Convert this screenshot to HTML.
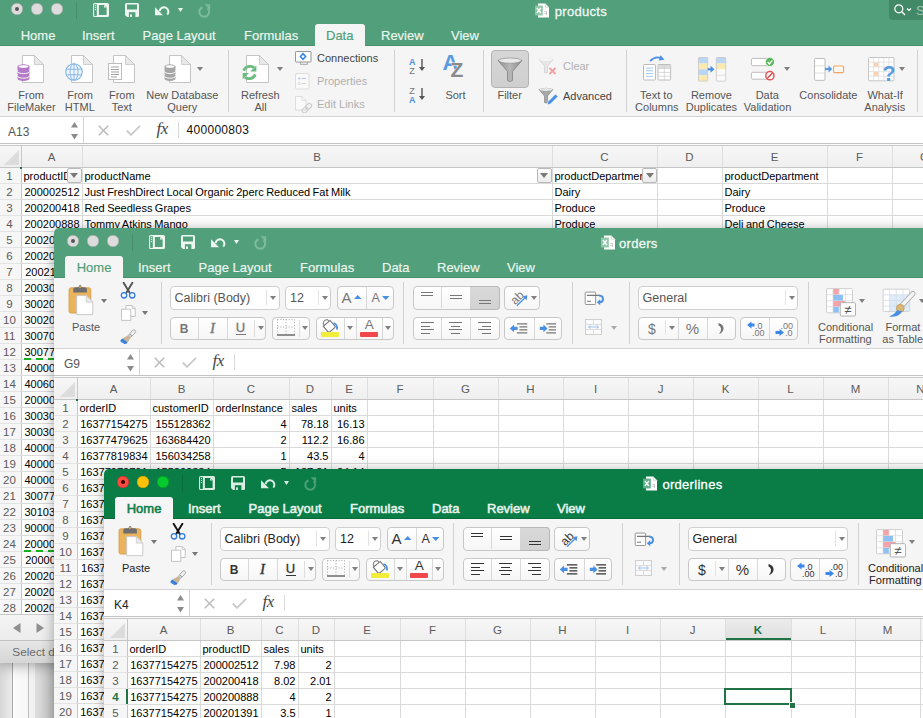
<!DOCTYPE html>
<html><head><meta charset="utf-8"><style>
html,body{margin:0;padding:0;width:923px;height:718px;overflow:hidden;background:#e9e9e9;}
body{position:relative;font-family:"Liberation Sans", sans-serif;}
.t{position:absolute;white-space:nowrap;line-height:1;}
.b{position:absolute;}
.win{position:absolute;overflow:hidden;}
</style></head><body>
<div class="b" style="left:0.0px;top:0.0px;width:923.0px;height:718.0px;background:linear-gradient(90deg,#d6d6d6 0px,#ebebeb 12px,#a9a9a9 12px,#a9a9a9 13px,#fbfbfb 13px,#f6f6f6 28px,#bdbdbd 28px,#bdbdbd 29px,#f3f3f3 29px,#efefef 35px,#dedede 35.5px,#c4c4c4 54px);"></div><div class="win" style="left:-2px;top:-4px;width:1160px;height:667px;border-radius:5px;box-shadow:0 2px 14px rgba(0,0,0,0.35);background:#fff;"><div class="b" style="left:0.0px;top:0.0px;width:1160.0px;height:50.0px;background:#52a07b;"></div><div class="b" style="left:0.0px;top:49.0px;width:1160.0px;height:1.0px;background:#46906c;"></div><div class="b" style="left:13.0px;top:7.0px;width:12.0px;height:12.0px;border-radius:50%;background:#dcdcdc;box-shadow:inset 0 0 0 0.5px #8a9a90;"></div><div class="b" style="left:33.0px;top:7.0px;width:12.0px;height:12.0px;border-radius:50%;background:#dcdcdc;box-shadow:inset 0 0 0 0.5px #8a9a90;"></div><div class="b" style="left:53.0px;top:7.0px;width:12.0px;height:12.0px;border-radius:50%;background:#dcdcdc;box-shadow:inset 0 0 0 0.5px #8a9a90;"></div><div class="b" style="left:17.0px;top:11.0px;width:4.0px;height:4.0px;border-radius:50%;background:#555;"></div><div class="b" style="left:78.0px;top:6.0px;width:1.0px;height:17.0px;background:rgba(0,0,0,0.12);"></div><svg class="b" style="left:95.0px;top:7.0px" width="16" height="14" viewBox="0 0 16 14"><rect x="0" y="0" width="16" height="14" rx="1.6" fill="#eef6f1"/><rect x="1.1" y="1.1" width="2.7" height="11.8" fill="#52a07b"/><circle cx="2.45" cy="2.6" r="0.65" fill="#eef6f1"/><circle cx="2.45" cy="4.6" r="0.65" fill="#eef6f1"/><circle cx="2.45" cy="6.6" r="0.65" fill="#eef6f1"/><path d="M5.9 2 H11 L13.6 4.6 V12 H5.9Z" fill="#52a07b"/><path d="M11 2.3 V4.6 H13.3Z" fill="#eef6f1"/></svg><svg class="b" style="left:127.0px;top:7.0px" width="14" height="14" viewBox="0 0 14 14"><path d="M1.5 0 H12.5 Q14 0 14 1.5 V12.5 Q14 14 12.5 14 H2 L0 12 V1.5 Q0 0 1.5 0Z" fill="#eef6f1"/><rect x="2" y="1.5" width="10" height="5" fill="#52a07b"/><rect x="3.9" y="9.2" width="6.5" height="4.8" fill="#52a07b"/><rect x="5.1" y="11.3" width="1.8" height="2.7" fill="#eef6f1"/></svg><svg class="b" style="left:157.0px;top:9.0px" width="16" height="11" viewBox="0 0 16 11"><path d="M0 2.3 V10.3 H8Z" fill="#eef6f1"/><path d="M4.6 6.2 A4.4 4.4 0 1 1 12.3 9.6" fill="none" stroke="#eef6f1" stroke-width="2"/></svg><svg class="b" style="left:180.2px;top:12.2px" width="5" height="4" viewBox="0 0 5 4"><path d="M0 0 H5 L2.5 4Z" fill="#eef6f1"/></svg><svg class="b" style="left:200.0px;top:8.0px" width="13" height="13.5" viewBox="0 0 13 13.5"><path d="M9.6 4.2 A4.9 4.9 0 1 1 4.5 3.2" fill="none" stroke="#7dbb9c" stroke-width="2"/><path d="M6.5 0.3 H12.2 V6Z" fill="#7dbb9c"/></svg><svg class="b" style="left:537.0px;top:6.5px" width="15" height="15" viewBox="0 0 15 15"><path d="M3 0.5 H10.3 L14 4.2 V14.5 H3Z" fill="#fff"/><path d="M10.3 0.8 V4.2 H13.7" fill="none" stroke="#c9c9c9" stroke-width="0.8"/><path d="M9.3 8.5 H12 M9.3 10.5 H12 M11.5 8.5 V12" stroke="#c4c4c4" stroke-width="0.8"/><rect x="0" y="2.6" width="7.8" height="9.8" fill="#8fc6a8"/><path d="M1.9 5 L5.9 10 M5.9 5 L1.9 10" stroke="#fff" stroke-width="1.3"/></svg><div class="t" style="left:556.8px;top:8.6px;font-size:13px;color:#f0f7f3;font-weight:normal;letter-spacing:0.3px;-webkit-text-stroke:0.3px currentColor;">products</div><div class="t" style="left:22.7px;top:33.0px;font-size:13px;color:#eef6f1;font-weight:normal;-webkit-text-stroke:0.15px currentColor;">Home</div><div class="t" style="left:84.0px;top:33.0px;font-size:13px;color:#eef6f1;font-weight:normal;-webkit-text-stroke:0.15px currentColor;">Insert</div><div class="t" style="left:144.5px;top:33.0px;font-size:13px;color:#eef6f1;font-weight:normal;-webkit-text-stroke:0.15px currentColor;">Page Layout</div><div class="t" style="left:246.0px;top:33.0px;font-size:13px;color:#eef6f1;font-weight:normal;-webkit-text-stroke:0.15px currentColor;">Formulas</div><div class="b" style="left:317.0px;top:28.0px;width:50.0px;height:22.0px;background:#f5f5f5;border-radius:3px 3px 0 0;"></div><div class="t" style="left:328.0px;top:33.0px;font-size:13px;color:#4f9e77;font-weight:normal;-webkit-text-stroke:0.15px currentColor;">Data</div><div class="t" style="left:383.0px;top:33.0px;font-size:13px;color:#eef6f1;font-weight:normal;-webkit-text-stroke:0.15px currentColor;">Review</div><div class="t" style="left:453.0px;top:33.0px;font-size:13px;color:#eef6f1;font-weight:normal;-webkit-text-stroke:0.15px currentColor;">View</div><div class="b" style="left:0.0px;top:50.0px;width:1160.0px;height:70.0px;background:#f5f5f5;"></div><div class="b" style="left:0.0px;top:120.0px;width:1160.0px;height:1.0px;background:#d3d3d3;"></div><svg class="b" style="left:24.0px;top:59.0px" width="22" height="28" viewBox="0 0 22 28"><path d="M0.5 0.5 H12.5 L21.5 9.5 V27.5 H0.5Z" fill="#fff" stroke="#c4c4c4" stroke-width="1"/><path d="M12.5 0.5 V9.5 H21.5Z" fill="#e9e9e9" stroke="#c4c4c4" stroke-width="0.8"/></svg><svg class="b" style="left:18.5px;top:67.5px" width="13" height="17" viewBox="0 0 13 17"><path d="M0.5 11.7 V14.7 A6.0 2.2 0 0 0 12.5 14.7 V11.7 Z" fill="#b57bc8"/><ellipse cx="6.5" cy="11.7" rx="6.0" ry="2.2" fill="#b57bc8"/><path d="M0.5 12.0 A6.0 2.2 0 0 0 12.5 12.0" fill="none" stroke="#fff" stroke-width="0.9"/><path d="M0.5 7.1 V10.1 A6.0 2.2 0 0 0 12.5 10.1 V7.1 Z" fill="#b57bc8"/><ellipse cx="6.5" cy="7.1" rx="6.0" ry="2.2" fill="#b57bc8"/><path d="M0.5 7.3999999999999995 A6.0 2.2 0 0 0 12.5 7.3999999999999995" fill="none" stroke="#fff" stroke-width="0.9"/><path d="M0.5 2.5 V5.5 A6.0 2.2 0 0 0 12.5 5.5 V2.5 Z" fill="#b57bc8"/><ellipse cx="6.5" cy="2.5" rx="6.0" ry="2.2" fill="#b57bc8"/><ellipse cx="6.5" cy="2.5" rx="4.9" ry="1.3" fill="#fff"/></svg><div class="t" style="left:-116.8px;width:300px;text-align:center;top:93.9px;font-size:11px;color:#555;font-weight:normal;">From</div><div class="t" style="left:-116.5px;width:300px;text-align:center;top:105.7px;font-size:11px;color:#555;font-weight:normal;">FileMaker</div><svg class="b" style="left:73.0px;top:59.0px" width="22" height="28" viewBox="0 0 22 28"><path d="M0.5 0.5 H12.5 L21.5 9.5 V27.5 H0.5Z" fill="#fff" stroke="#c4c4c4" stroke-width="1"/><path d="M12.5 0.5 V9.5 H21.5Z" fill="#e9e9e9" stroke="#c4c4c4" stroke-width="0.8"/></svg><svg class="b" style="left:66.5px;top:66.5px" width="18" height="18" viewBox="0 0 18 18"><circle cx="9" cy="9" r="8.2" fill="#eef5fd" stroke="#7fb2ea" stroke-width="1.1"/><ellipse cx="9" cy="9" rx="4" ry="8.2" fill="none" stroke="#7fb2ea" stroke-width="0.9"/><path d="M9 0.8 V17.2 M1.3 6.2 H16.7 M1.3 11.8 H16.7" stroke="#7fb2ea" stroke-width="0.9"/></svg><div class="t" style="left:-68.0px;width:300px;text-align:center;top:93.9px;font-size:11px;color:#555;font-weight:normal;">From</div><div class="t" style="left:-68.2px;width:300px;text-align:center;top:105.7px;font-size:11px;color:#555;font-weight:normal;">HTML</div><svg class="b" style="left:115.0px;top:59.0px" width="22" height="28" viewBox="0 0 22 28"><path d="M0.5 0.5 H12.5 L21.5 9.5 V27.5 H0.5Z" fill="#fff" stroke="#c4c4c4" stroke-width="1"/><path d="M12.5 0.5 V9.5 H21.5Z" fill="#e9e9e9" stroke="#c4c4c4" stroke-width="0.8"/></svg><svg class="b" style="left:110.0px;top:67.0px" width="14" height="17" viewBox="0 0 14 17"><rect x="0.5" y="0.5" width="13" height="16" fill="#fff" stroke="#bdbdbd"/><path d="M3 4 H11 M3 6.5 H11 M3 9 H11 M3 11.5 H11 M3 14 H9" stroke="#999" stroke-width="0.9"/></svg><div class="t" style="left:-26.2px;width:300px;text-align:center;top:93.9px;font-size:11px;color:#555;font-weight:normal;">From</div><div class="t" style="left:-26.2px;width:300px;text-align:center;top:105.7px;font-size:11px;color:#555;font-weight:normal;">Text</div><svg class="b" style="left:171.0px;top:59.0px" width="22" height="28" viewBox="0 0 22 28"><path d="M0.5 0.5 H12.5 L21.5 9.5 V27.5 H0.5Z" fill="#fff" stroke="#c4c4c4" stroke-width="1"/><path d="M12.5 0.5 V9.5 H21.5Z" fill="#e9e9e9" stroke="#c4c4c4" stroke-width="0.8"/></svg><svg class="b" style="left:165.5px;top:67.5px" width="12" height="17" viewBox="0 0 12 17"><path d="M0.5 11.7 V14.7 A5.5 2.2 0 0 0 11.5 14.7 V11.7 Z" fill="#a6a6a6"/><ellipse cx="6.0" cy="11.7" rx="5.5" ry="2.2" fill="#a6a6a6"/><path d="M0.5 12.0 A5.5 2.2 0 0 0 11.5 12.0" fill="none" stroke="#fff" stroke-width="0.9"/><path d="M0.5 7.1 V10.1 A5.5 2.2 0 0 0 11.5 10.1 V7.1 Z" fill="#a6a6a6"/><ellipse cx="6.0" cy="7.1" rx="5.5" ry="2.2" fill="#a6a6a6"/><path d="M0.5 7.3999999999999995 A5.5 2.2 0 0 0 11.5 7.3999999999999995" fill="none" stroke="#fff" stroke-width="0.9"/><path d="M0.5 2.5 V5.5 A5.5 2.2 0 0 0 11.5 5.5 V2.5 Z" fill="#a6a6a6"/><ellipse cx="6.0" cy="2.5" rx="5.5" ry="2.2" fill="#a6a6a6"/><ellipse cx="6.0" cy="2.5" rx="4.4" ry="1.3" fill="#fff"/></svg><svg class="b" style="left:198.5px;top:70.6px" width="6" height="4" viewBox="0 0 6 4"><path d="M0 0 H6 L3.0 4Z" fill="#808080"/></svg><div class="t" style="left:34.3px;width:300px;text-align:center;top:93.9px;font-size:11px;color:#555;font-weight:normal;">New Database</div><div class="t" style="left:34.2px;width:300px;text-align:center;top:105.7px;font-size:11px;color:#555;font-weight:normal;">Query</div><div class="b" style="left:230.0px;top:54.0px;width:1.0px;height:62.0px;background:#d0d0d0;"></div><svg class="b" style="left:248.0px;top:59.0px" width="23" height="28" viewBox="0 0 23 28"><path d="M0.5 0.5 H13.5 L22.5 9.5 V27.5 H0.5Z" fill="#fff" stroke="#c4c4c4" stroke-width="1"/><path d="M13.5 0.5 V9.5 H22.5Z" fill="#e9e9e9" stroke="#c4c4c4" stroke-width="0.8"/></svg><svg class="b" style="left:243.5px;top:68.5px" width="16" height="15" viewBox="0 0 16 15"><path d="M1.6 5.6 Q3.8 1.3 8.2 1.4 Q10.6 1.5 12 2.8" stroke="#6dbb7e" stroke-width="2.9" fill="none"/><path d="M14.4 0.4 V6.6 H8.2Z" fill="#6dbb7e"/><path d="M13.3 9.4 Q11.2 13.7 6.8 13.6 Q4.4 13.5 3 12.2" stroke="#6dbb7e" stroke-width="2.9" fill="none"/><path d="M0.7 8 H6.9 L0.7 14.2Z" fill="#6dbb7e"/></svg><svg class="b" style="left:279.0px;top:70.6px" width="6" height="4" viewBox="0 0 6 4"><path d="M0 0 H6 L3.0 4Z" fill="#808080"/></svg><div class="t" style="left:112.3px;width:300px;text-align:center;top:93.9px;font-size:11px;color:#555;font-weight:normal;">Refresh</div><div class="t" style="left:112.5px;width:300px;text-align:center;top:105.7px;font-size:11px;color:#555;font-weight:normal;">All</div><svg class="b" style="left:297.0px;top:55.0px" width="17" height="14" viewBox="0 0 17 14"><rect x="5.5" y="10" width="7" height="3.3" fill="#eee" stroke="#9a9a9a" stroke-width="0.8"/><rect x="0.5" y="0.5" width="15.5" height="10.5" rx="0.8" fill="#fff" stroke="#8a8a8a" stroke-width="0.9"/><path d="M8 2.6 L10.6 5.5 L8 8.4 L5.4 5.5Z" fill="#fff" stroke="#3b88e8" stroke-width="1.6"/></svg><div class="t" style="left:319.0px;top:56.7px;font-size:11px;color:#444;font-weight:normal;">Connections</div><svg class="b" style="left:297.0px;top:77.0px" width="15" height="17" viewBox="0 0 15 17"><rect x="0.5" y="0.5" width="13.5" height="15.5" rx="1.5" fill="#fafafa" stroke="#d9d9d9" stroke-width="0.9"/><circle cx="4.3" cy="5.5" r="1.1" fill="#a9c9ef"/><path d="M6.5 5.5 H11" stroke="#a9c9ef" stroke-width="1"/><circle cx="4.3" cy="10.5" r="1.1" fill="none" stroke="#d0d0d0" stroke-width="0.8"/><path d="M6.5 10.5 H11" stroke="#d6d6d6" stroke-width="1"/></svg><div class="t" style="left:319.0px;top:79.7px;font-size:11px;color:#b0b0b0;font-weight:normal;">Properties</div><svg class="b" style="left:297.0px;top:100.0px" width="18" height="17" viewBox="0 0 18 17"><path d="M0.5 0.5 H7 L11 4.5 V14 H0.5Z" fill="#fafafa" stroke="#d9d9d9" stroke-width="0.9"/><path d="M7 0.5 V4.5 H11" fill="none" stroke="#d9d9d9" stroke-width="0.8"/><g transform="rotate(-45 12 12)"><rect x="6" y="9.8" width="6.5" height="4.4" rx="2.2" fill="none" stroke="#cfcfcf" stroke-width="1.2"/><rect x="11" y="9.8" width="6.5" height="4.4" rx="2.2" fill="none" stroke="#cfcfcf" stroke-width="1.2"/></g></svg><div class="t" style="left:319.0px;top:102.7px;font-size:11px;color:#b0b0b0;font-weight:normal;">Edit Links</div><div class="b" style="left:395.7px;top:54.0px;width:1.0px;height:62.0px;background:#d0d0d0;"></div><svg class="b" style="left:411.0px;top:61.0px" width="18" height="17" viewBox="0 0 18 17"><text x="0" y="7.5" font-size="9" font-weight="bold" font-family="Liberation Sans" fill="#4a90e2">A</text><text x="0.3" y="16.5" font-size="9" font-family="Liberation Sans" fill="#777">Z</text><path d="M13 2 V13" stroke="#555" stroke-width="1.4"/><path d="M10 10 H16 L13 14Z" fill="#555"/></svg><svg class="b" style="left:411.0px;top:90.0px" width="18" height="17" viewBox="0 0 18 17"><text x="0.3" y="7.5" font-size="9" font-family="Liberation Sans" fill="#777">Z</text><text x="0" y="16.5" font-size="9" font-weight="bold" font-family="Liberation Sans" fill="#4a90e2">A</text><path d="M13 2 V13" stroke="#555" stroke-width="1.4"/><path d="M10 10 H16 L13 14Z" fill="#555"/></svg><svg class="b" style="left:443.0px;top:56.0px" width="30" height="30" viewBox="0 0 30 30"><text x="1.5" y="17.5" font-size="22" font-weight="bold" font-family="Liberation Sans" fill="#5b9be0">A</text><text x="9.5" y="24.5" font-size="21" font-weight="bold" font-family="Liberation Sans" fill="#8a8a8a" stroke="#f5f5f5" stroke-width="0.8" paint-order="stroke">Z</text></svg><div class="t" style="left:307.5px;width:300px;text-align:center;top:93.9px;font-size:11px;color:#555;font-weight:normal;">Sort</div><div class="b" style="left:484.5px;top:54.0px;width:1.0px;height:62.0px;background:#d0d0d0;"></div><div class="b" style="left:493.0px;top:54.0px;width:38.0px;height:38.0px;background:linear-gradient(#d6d6d6,#cfcfcf);border:1px solid #b3b3b3;border-radius:4px;box-sizing:border-box;"></div><svg class="b" style="left:499.0px;top:60.5px" width="27" height="26" viewBox="0 0 27 26"><defs><linearGradient id="fg" x1="0" x2="1"><stop offset="0" stop-color="#8f8f8f"/><stop offset="0.5" stop-color="#b8b8b8"/><stop offset="1" stop-color="#8a8a8a"/></linearGradient></defs><path d="M1 3.5 Q13 -0.5 25 3.5 L15.5 14.5 V23.5 Q13 25.5 10.5 23.5 V14.5Z" fill="url(#fg)" stroke="#7d7d7d" stroke-width="0.7"/><ellipse cx="13" cy="3.6" rx="11.2" ry="2.6" fill="#e9e9e9" stroke="#8a8a8a" stroke-width="0.6"/></svg><div class="t" style="left:361.7px;width:300px;text-align:center;top:93.9px;font-size:11px;color:#555;font-weight:normal;">Filter</div><svg class="b" style="left:540.0px;top:61.0px" width="20" height="19" viewBox="0 0 20 19"><path d="M1 2.5 Q8 0 15 2.5 L9.5 9 V15.5 Q8 16.5 6.5 15.5 V9Z" fill="#e6e6e6" stroke="#cfcfcf" stroke-width="0.7"/><ellipse cx="8" cy="2.5" rx="6.5" ry="1.4" fill="#f7f7f7"/><path d="M11.5 11 L17.5 17 M17.5 11 L11.5 17" stroke="#f2a0a0" stroke-width="1.8"/></svg><div class="t" style="left:565.0px;top:64.7px;font-size:11px;color:#b0b0b0;font-weight:normal;">Clear</div><svg class="b" style="left:540.0px;top:91.0px" width="21" height="19" viewBox="0 0 21 19"><path d="M1 2.5 Q8 0 15 2.5 L9.5 9 V15.5 Q8 16.5 6.5 15.5 V9Z" fill="#a8a8a8" stroke="#8a8a8a" stroke-width="0.7"/><ellipse cx="8" cy="2.5" rx="6.5" ry="1.4" fill="#e6e6e6"/><path d="M9 18 L10 14.5 L17.5 7 L20 9.5 L12.5 17Z" fill="#4a90e2" stroke="#fff" stroke-width="0.6"/></svg><div class="t" style="left:565.0px;top:94.7px;font-size:11px;color:#444;font-weight:normal;">Advanced</div><div class="b" style="left:627.5px;top:54.0px;width:1.0px;height:62.0px;background:#d0d0d0;"></div><svg class="b" style="left:644.0px;top:59.0px" width="30" height="26" viewBox="0 0 30 26"><path d="M8 6 Q14 0.5 19.5 3.5" stroke="#4a90e2" stroke-width="1.8" fill="none"/><path d="M18.5 0.3 L22.5 4.8 L16.8 5.6Z" fill="#4a90e2"/><rect x="1.5" y="9.5" width="12" height="15.5" rx="0.8" fill="#fff" stroke="#b5b5b5" stroke-width="0.9"/><path d="M4 13 H11 M4 15.8 H11 M4 18.6 H11 M4 21.4 H11" stroke="#9cc3ee" stroke-width="0.9"/><rect x="16" y="9.5" width="12.6" height="15.5" rx="0.8" fill="#fff" stroke="#b5b5b5" stroke-width="0.9"/><rect x="16.5" y="10" width="11.6" height="3.6" fill="#dcdcdc"/><path d="M16 13.6 H28.6 M16 17.4 H28.6 M16 21.2 H28.6 M22.3 9.5 V25" stroke="#cfcfcf" stroke-width="0.8"/></svg><div class="t" style="left:508.3px;width:300px;text-align:center;top:93.9px;font-size:11px;color:#555;font-weight:normal;">Text to</div><div class="t" style="left:508.8px;width:300px;text-align:center;top:105.7px;font-size:11px;color:#555;font-weight:normal;">Columns</div><svg class="b" style="left:700.0px;top:61.0px" width="29" height="25" viewBox="0 0 29 25"><rect x="0.5" y="0.5" width="9.2" height="5.9" fill="#b9d7f5"/><rect x="0.5" y="6.4" width="9.2" height="5.9" fill="#fbe9b0"/><rect x="0.5" y="12.3" width="9.2" height="5.9" fill="#b9d7f5"/><rect x="0.5" y="18.2" width="9.2" height="5.9" fill="#fbe9b0"/><rect x="0.5" y="0.5" width="9.2" height="23.6" rx="0.8" fill="none" stroke="#c6c6c6" stroke-width="0.8"/><path d="M9.7 12.3 H13" stroke="#4a90e2" stroke-width="2.2"/><path d="M12.5 8.8 L16.5 12.3 L12.5 15.8Z" fill="#4a90e2"/><rect x="18.4" y="0.5" width="9.3" height="5.9" fill="#b9d7f5"/><rect x="18.4" y="6.4" width="9.3" height="5.9" fill="#fbe9b0"/><rect x="18.4" y="12.3" width="9.3" height="11.8" fill="#fafafa"/><path d="M18.4 18.2 H27.7" stroke="#dcdcdc" stroke-width="0.8"/><rect x="18.4" y="0.5" width="9.3" height="23.6" rx="0.8" fill="none" stroke="#c6c6c6" stroke-width="0.8"/></svg><div class="t" style="left:563.4px;width:300px;text-align:center;top:93.9px;font-size:11px;color:#555;font-weight:normal;">Remove</div><div class="t" style="left:563.4px;width:300px;text-align:center;top:105.7px;font-size:11px;color:#555;font-weight:normal;">Duplicates</div><svg class="b" style="left:752.0px;top:60.0px" width="26" height="25" viewBox="0 0 26 25"><rect x="1.4" y="2.4" width="19" height="7.3" rx="1.5" fill="#fff" stroke="#b5b5b5" stroke-width="0.9"/><rect x="1.4" y="16.3" width="19" height="6.9" rx="1.5" fill="#fff" stroke="#b5b5b5" stroke-width="0.9"/><circle cx="19.9" cy="5.9" r="4.6" fill="#5cb85c" stroke="#fff" stroke-width="0.8"/><path d="M17.6 6 L19.4 7.9 L22.3 4.3" stroke="#fff" stroke-width="1.3" fill="none"/><circle cx="19.9" cy="19.7" r="4.1" fill="#fff" stroke="#e05555" stroke-width="1.5"/><path d="M17.1 22.5 L22.7 16.9" stroke="#e05555" stroke-width="1.5"/></svg><svg class="b" style="left:786.0px;top:70.6px" width="6" height="4" viewBox="0 0 6 4"><path d="M0 0 H6 L3.0 4Z" fill="#808080"/></svg><div class="t" style="left:619.3px;width:300px;text-align:center;top:93.9px;font-size:11px;color:#555;font-weight:normal;">Data</div><div class="t" style="left:619.5px;width:300px;text-align:center;top:105.7px;font-size:11px;color:#555;font-weight:normal;">Validation</div><svg class="b" style="left:816.0px;top:61.5px" width="31" height="23" viewBox="0 0 31 23"><rect x="0.5" y="0.5" width="10.5" height="21.8" rx="1" fill="#fff" stroke="#b5b5b5" stroke-width="0.9"/><path d="M0.5 7.8 H11 M0.5 15 H11" stroke="#d5d5d5" stroke-width="0.8"/><path d="M11 11 H15" stroke="#5b9be0" stroke-width="2.2"/><path d="M14.5 7.6 L18.3 11 L14.5 14.4Z" fill="#5b9be0"/><rect x="19.6" y="8" width="10" height="6.6" rx="1" fill="#fff8f0" stroke="#f2a35e" stroke-width="1.1"/></svg><div class="t" style="left:680.4px;width:300px;text-align:center;top:93.9px;font-size:11px;color:#555;font-weight:normal;">Consolidate</div><svg class="b" style="left:870.0px;top:61.0px" width="29" height="27" viewBox="0 0 29 27"><rect x="0.5" y="0.5" width="25.5" height="23.3" rx="1" fill="#fff" stroke="#bdbdbd" stroke-width="0.9"/><path d="M0.5 5.2 H26 M0.5 9.9 H26 M0.5 14.6 H26 M0.5 19.2 H26 M5.6 0.5 V23.8 M10.7 0.5 V23.8 M15.8 0.5 V23.8 M20.9 0.5 V23.8" stroke="#dedede" stroke-width="0.8"/><rect x="5.9" y="5.5" width="4.5" height="4.1" fill="#f9d3b3"/><rect x="5.9" y="14.9" width="4.5" height="4" fill="#f9d3b3"/><text x="21" y="24" font-size="22" font-weight="bold" font-family="Liberation Sans" text-anchor="middle" fill="#5b9be0" stroke="#fff" stroke-width="0.6" paint-order="stroke">?</text></svg><svg class="b" style="left:901.0px;top:70.6px" width="6" height="4" viewBox="0 0 6 4"><path d="M0 0 H6 L3.0 4Z" fill="#808080"/></svg><div class="t" style="left:737.2px;width:300px;text-align:center;top:93.9px;font-size:11px;color:#555;font-weight:normal;">What-If</div><div class="t" style="left:736.8px;width:300px;text-align:center;top:105.7px;font-size:11px;color:#555;font-weight:normal;">Analysis</div><div class="b" style="left:919.0px;top:54.0px;width:1.0px;height:62.0px;background:#d0d0d0;"></div><div class="b" style="left:891.3px;top:0.0px;width:300.0px;height:23.7px;background:#428a67;border-radius:0 0 0 4px;"></div><svg class="b" style="left:896.0px;top:7.5px" width="18" height="13" viewBox="0 0 18 13"><circle cx="4.8" cy="4.8" r="4" fill="none" stroke="#fff" stroke-width="1.2"/><path d="M7.8 7.8 L11 11" stroke="#fff" stroke-width="1.3"/><path d="M13 4.5 L15 6.5 L17 4.5" stroke="#fff" stroke-width="1.1" fill="none"/></svg><div class="t" style="left:918.0px;top:8.0px;font-size:13px;color:#9cc4af;font-weight:normal;">S</div><div class="b" style="left:0.0px;top:121.0px;width:2000.0px;height:26.0px;background:#fff;"></div><div class="t" style="left:10.0px;top:129.8px;font-size:12px;color:#555;font-weight:normal;">A13</div><svg class="b" style="left:73.0px;top:125.5px" width="7" height="18" viewBox="0 0 7 18"><path d="M0 5.5 L3.5 0 L7 5.5Z M0 12 H7 L3.5 17.5Z" fill="#8c8c8c"/></svg><div class="b" style="left:85.4px;top:120.0px;width:1.0px;height:27.0px;background:#d4d4d4;"></div><svg class="b" style="left:100.0px;top:129.0px" width="11" height="11" viewBox="0 0 11 11"><path d="M0.8 0.8 L10.2 10.2 M10.2 0.8 L0.8 10.2" stroke="#bdbdbd" stroke-width="1.6"/></svg><svg class="b" style="left:127.5px;top:128.5px" width="15" height="11" viewBox="0 0 15 11"><path d="M0.8 5.5 L5 9.8 L14 0.8" stroke="#c9c9c9" stroke-width="1.8" fill="none"/></svg><div class="t" style="left:158.5px;top:124.1px;font-size:17px;color:#444;font-weight:normal;font-family:Liberation Serif;letter-spacing:-0.5px;"><i>f</i><i>x</i></div><div class="b" style="left:180.0px;top:126.0px;width:1.0px;height:16.0px;background:#d9d9d9;"></div><div class="t" style="left:188.5px;top:127.6px;font-size:12px;color:#111;font-weight:normal;letter-spacing:0.3px;">400000803</div><div class="b" style="left:0.0px;top:147.0px;width:2000.0px;height:1.0px;background:#c4c4c4;"></div><div class="b" style="left:0.0px;top:148.0px;width:2000.0px;height:1.0px;background:#fbfbfb;"></div><div class="b" style="left:0.0px;top:149.0px;width:2000.0px;height:1.0px;background:#c8c8c8;"></div><div class="b" style="left:0.0px;top:150.0px;width:1160.0px;height:21.0px;background:linear-gradient(#f7f7f7,#efefef);"></div><div class="b" style="left:0.0px;top:171.0px;width:23.0px;height:2000.0px;background:#f6f6f6;"></div><svg class="b" style="left:6.0px;top:154.0px" width="15" height="15" viewBox="0 0 15 15"><path d="M15 0 V15 H0Z" fill="#dcdcdc"/></svg><div class="t" style="left:-96.5px;width:300px;text-align:center;top:155.6px;font-size:11.5px;color:#5c5c5c;font-weight:normal;">A</div><div class="t" style="left:169.0px;width:300px;text-align:center;top:155.6px;font-size:11.5px;color:#5c5c5c;font-weight:normal;">B</div><div class="t" style="left:456.5px;width:300px;text-align:center;top:155.6px;font-size:11.5px;color:#5c5c5c;font-weight:normal;">C</div><div class="t" style="left:541.5px;width:300px;text-align:center;top:155.6px;font-size:11.5px;color:#5c5c5c;font-weight:normal;">D</div><div class="t" style="left:626.5px;width:300px;text-align:center;top:155.6px;font-size:11.5px;color:#5c5c5c;font-weight:normal;">E</div><div class="t" style="left:711.5px;width:300px;text-align:center;top:155.6px;font-size:11.5px;color:#5c5c5c;font-weight:normal;">F</div><div class="t" style="left:776.5px;width:300px;text-align:center;top:155.6px;font-size:11.5px;color:#5c5c5c;font-weight:normal;">G</div><div class="t" style="left:841.5px;width:300px;text-align:center;top:155.6px;font-size:11.5px;color:#5c5c5c;font-weight:normal;">H</div><div class="b" style="left:23.0px;top:150.0px;width:1.0px;height:2000.0px;background:#c6c6c6;"></div><div class="b" style="left:84.0px;top:150.0px;width:1.0px;height:21.0px;background:#dedede;"></div><div class="b" style="left:84.0px;top:171.0px;width:1.0px;height:2000.0px;background:#dadada;"></div><div class="b" style="left:554.0px;top:150.0px;width:1.0px;height:21.0px;background:#dedede;"></div><div class="b" style="left:554.0px;top:171.0px;width:1.0px;height:2000.0px;background:#dadada;"></div><div class="b" style="left:659.0px;top:150.0px;width:1.0px;height:21.0px;background:#dedede;"></div><div class="b" style="left:659.0px;top:171.0px;width:1.0px;height:2000.0px;background:#dadada;"></div><div class="b" style="left:724.0px;top:150.0px;width:1.0px;height:21.0px;background:#dedede;"></div><div class="b" style="left:724.0px;top:171.0px;width:1.0px;height:2000.0px;background:#dadada;"></div><div class="b" style="left:829.0px;top:150.0px;width:1.0px;height:21.0px;background:#dedede;"></div><div class="b" style="left:829.0px;top:171.0px;width:1.0px;height:2000.0px;background:#dadada;"></div><div class="b" style="left:894.0px;top:150.0px;width:1.0px;height:21.0px;background:#dedede;"></div><div class="b" style="left:894.0px;top:171.0px;width:1.0px;height:2000.0px;background:#dadada;"></div><div class="b" style="left:959.0px;top:150.0px;width:1.0px;height:21.0px;background:#dedede;"></div><div class="b" style="left:959.0px;top:171.0px;width:1.0px;height:2000.0px;background:#dadada;"></div><div class="b" style="left:1024.0px;top:150.0px;width:1.0px;height:21.0px;background:#dedede;"></div><div class="b" style="left:1024.0px;top:171.0px;width:1.0px;height:2000.0px;background:#dadada;"></div><div class="b" style="left:0.0px;top:171.0px;width:1160.0px;height:1.0px;background:#c6c6c6;"></div><div class="b" style="left:0.0px;top:187.0px;width:23.0px;height:1.0px;background:#e4e4e4;"></div><div class="b" style="left:23.0px;top:187.0px;width:1160.0px;height:1.0px;background:#dadada;"></div><div class="t" style="left:-138.5px;width:300px;text-align:center;top:174.5px;font-size:11.5px;color:#5a5a5a;font-weight:normal;">1</div><div class="b" style="left:0.0px;top:203.0px;width:23.0px;height:1.0px;background:#e4e4e4;"></div><div class="b" style="left:23.0px;top:203.0px;width:1160.0px;height:1.0px;background:#dadada;"></div><div class="t" style="left:-138.5px;width:300px;text-align:center;top:190.5px;font-size:11.5px;color:#5a5a5a;font-weight:normal;">2</div><div class="b" style="left:0.0px;top:219.0px;width:23.0px;height:1.0px;background:#e4e4e4;"></div><div class="b" style="left:23.0px;top:219.0px;width:1160.0px;height:1.0px;background:#dadada;"></div><div class="t" style="left:-138.5px;width:300px;text-align:center;top:206.5px;font-size:11.5px;color:#5a5a5a;font-weight:normal;">3</div><div class="b" style="left:0.0px;top:235.0px;width:23.0px;height:1.0px;background:#e4e4e4;"></div><div class="b" style="left:23.0px;top:235.0px;width:1160.0px;height:1.0px;background:#dadada;"></div><div class="t" style="left:-138.5px;width:300px;text-align:center;top:222.5px;font-size:11.5px;color:#5a5a5a;font-weight:normal;">4</div><div class="b" style="left:0.0px;top:251.0px;width:23.0px;height:1.0px;background:#e4e4e4;"></div><div class="b" style="left:23.0px;top:251.0px;width:1160.0px;height:1.0px;background:#dadada;"></div><div class="t" style="left:-138.5px;width:300px;text-align:center;top:238.5px;font-size:11.5px;color:#5a5a5a;font-weight:normal;">5</div><div class="b" style="left:0.0px;top:267.0px;width:23.0px;height:1.0px;background:#e4e4e4;"></div><div class="b" style="left:23.0px;top:267.0px;width:1160.0px;height:1.0px;background:#dadada;"></div><div class="t" style="left:-138.5px;width:300px;text-align:center;top:254.5px;font-size:11.5px;color:#5a5a5a;font-weight:normal;">6</div><div class="b" style="left:0.0px;top:283.0px;width:23.0px;height:1.0px;background:#e4e4e4;"></div><div class="b" style="left:23.0px;top:283.0px;width:1160.0px;height:1.0px;background:#dadada;"></div><div class="t" style="left:-138.5px;width:300px;text-align:center;top:270.5px;font-size:11.5px;color:#5a5a5a;font-weight:normal;">7</div><div class="b" style="left:0.0px;top:299.0px;width:23.0px;height:1.0px;background:#e4e4e4;"></div><div class="b" style="left:23.0px;top:299.0px;width:1160.0px;height:1.0px;background:#dadada;"></div><div class="t" style="left:-138.5px;width:300px;text-align:center;top:286.5px;font-size:11.5px;color:#5a5a5a;font-weight:normal;">8</div><div class="b" style="left:0.0px;top:315.0px;width:23.0px;height:1.0px;background:#e4e4e4;"></div><div class="b" style="left:23.0px;top:315.0px;width:1160.0px;height:1.0px;background:#dadada;"></div><div class="t" style="left:-138.5px;width:300px;text-align:center;top:302.5px;font-size:11.5px;color:#5a5a5a;font-weight:normal;">9</div><div class="b" style="left:0.0px;top:331.0px;width:23.0px;height:1.0px;background:#e4e4e4;"></div><div class="b" style="left:23.0px;top:331.0px;width:1160.0px;height:1.0px;background:#dadada;"></div><div class="t" style="left:-138.5px;width:300px;text-align:center;top:318.5px;font-size:11.5px;color:#5a5a5a;font-weight:normal;">10</div><div class="b" style="left:0.0px;top:347.0px;width:23.0px;height:1.0px;background:#e4e4e4;"></div><div class="b" style="left:23.0px;top:347.0px;width:1160.0px;height:1.0px;background:#dadada;"></div><div class="t" style="left:-138.5px;width:300px;text-align:center;top:334.5px;font-size:11.5px;color:#5a5a5a;font-weight:normal;">11</div><div class="b" style="left:0.0px;top:363.0px;width:23.0px;height:1.0px;background:#e4e4e4;"></div><div class="b" style="left:23.0px;top:363.0px;width:1160.0px;height:1.0px;background:#dadada;"></div><div class="t" style="left:-138.5px;width:300px;text-align:center;top:350.5px;font-size:11.5px;color:#5a5a5a;font-weight:normal;">12</div><div class="b" style="left:0.0px;top:379.0px;width:23.0px;height:1.0px;background:#e4e4e4;"></div><div class="b" style="left:23.0px;top:379.0px;width:1160.0px;height:1.0px;background:#dadada;"></div><div class="t" style="left:-138.5px;width:300px;text-align:center;top:366.5px;font-size:11.5px;color:#5a5a5a;font-weight:normal;">13</div><div class="b" style="left:0.0px;top:395.0px;width:23.0px;height:1.0px;background:#e4e4e4;"></div><div class="b" style="left:23.0px;top:395.0px;width:1160.0px;height:1.0px;background:#dadada;"></div><div class="t" style="left:-138.5px;width:300px;text-align:center;top:382.5px;font-size:11.5px;color:#5a5a5a;font-weight:normal;">14</div><div class="b" style="left:0.0px;top:411.0px;width:23.0px;height:1.0px;background:#e4e4e4;"></div><div class="b" style="left:23.0px;top:411.0px;width:1160.0px;height:1.0px;background:#dadada;"></div><div class="t" style="left:-138.5px;width:300px;text-align:center;top:398.5px;font-size:11.5px;color:#5a5a5a;font-weight:normal;">15</div><div class="b" style="left:0.0px;top:427.0px;width:23.0px;height:1.0px;background:#e4e4e4;"></div><div class="b" style="left:23.0px;top:427.0px;width:1160.0px;height:1.0px;background:#dadada;"></div><div class="t" style="left:-138.5px;width:300px;text-align:center;top:414.5px;font-size:11.5px;color:#5a5a5a;font-weight:normal;">16</div><div class="b" style="left:0.0px;top:443.0px;width:23.0px;height:1.0px;background:#e4e4e4;"></div><div class="b" style="left:23.0px;top:443.0px;width:1160.0px;height:1.0px;background:#dadada;"></div><div class="t" style="left:-138.5px;width:300px;text-align:center;top:430.5px;font-size:11.5px;color:#5a5a5a;font-weight:normal;">17</div><div class="b" style="left:0.0px;top:459.0px;width:23.0px;height:1.0px;background:#e4e4e4;"></div><div class="b" style="left:23.0px;top:459.0px;width:1160.0px;height:1.0px;background:#dadada;"></div><div class="t" style="left:-138.5px;width:300px;text-align:center;top:446.5px;font-size:11.5px;color:#5a5a5a;font-weight:normal;">18</div><div class="b" style="left:0.0px;top:475.0px;width:23.0px;height:1.0px;background:#e4e4e4;"></div><div class="b" style="left:23.0px;top:475.0px;width:1160.0px;height:1.0px;background:#dadada;"></div><div class="t" style="left:-138.5px;width:300px;text-align:center;top:462.5px;font-size:11.5px;color:#5a5a5a;font-weight:normal;">19</div><div class="b" style="left:0.0px;top:491.0px;width:23.0px;height:1.0px;background:#e4e4e4;"></div><div class="b" style="left:23.0px;top:491.0px;width:1160.0px;height:1.0px;background:#dadada;"></div><div class="t" style="left:-138.5px;width:300px;text-align:center;top:478.5px;font-size:11.5px;color:#5a5a5a;font-weight:normal;">20</div><div class="b" style="left:0.0px;top:507.0px;width:23.0px;height:1.0px;background:#e4e4e4;"></div><div class="b" style="left:23.0px;top:507.0px;width:1160.0px;height:1.0px;background:#dadada;"></div><div class="t" style="left:-138.5px;width:300px;text-align:center;top:494.5px;font-size:11.5px;color:#5a5a5a;font-weight:normal;">21</div><div class="b" style="left:0.0px;top:523.0px;width:23.0px;height:1.0px;background:#e4e4e4;"></div><div class="b" style="left:23.0px;top:523.0px;width:1160.0px;height:1.0px;background:#dadada;"></div><div class="t" style="left:-138.5px;width:300px;text-align:center;top:510.5px;font-size:11.5px;color:#5a5a5a;font-weight:normal;">22</div><div class="b" style="left:0.0px;top:539.0px;width:23.0px;height:1.0px;background:#e4e4e4;"></div><div class="b" style="left:23.0px;top:539.0px;width:1160.0px;height:1.0px;background:#dadada;"></div><div class="t" style="left:-138.5px;width:300px;text-align:center;top:526.5px;font-size:11.5px;color:#5a5a5a;font-weight:normal;">23</div><div class="b" style="left:0.0px;top:555.0px;width:23.0px;height:1.0px;background:#e4e4e4;"></div><div class="b" style="left:23.0px;top:555.0px;width:1160.0px;height:1.0px;background:#dadada;"></div><div class="t" style="left:-138.5px;width:300px;text-align:center;top:542.5px;font-size:11.5px;color:#5a5a5a;font-weight:normal;">24</div><div class="b" style="left:0.0px;top:571.0px;width:23.0px;height:1.0px;background:#e4e4e4;"></div><div class="b" style="left:23.0px;top:571.0px;width:1160.0px;height:1.0px;background:#dadada;"></div><div class="t" style="left:-138.5px;width:300px;text-align:center;top:558.5px;font-size:11.5px;color:#5a5a5a;font-weight:normal;">25</div><div class="b" style="left:0.0px;top:587.0px;width:23.0px;height:1.0px;background:#e4e4e4;"></div><div class="b" style="left:23.0px;top:587.0px;width:1160.0px;height:1.0px;background:#dadada;"></div><div class="t" style="left:-138.5px;width:300px;text-align:center;top:574.5px;font-size:11.5px;color:#5a5a5a;font-weight:normal;">26</div><div class="b" style="left:0.0px;top:603.0px;width:23.0px;height:1.0px;background:#e4e4e4;"></div><div class="b" style="left:23.0px;top:603.0px;width:1160.0px;height:1.0px;background:#dadada;"></div><div class="t" style="left:-138.5px;width:300px;text-align:center;top:590.5px;font-size:11.5px;color:#5a5a5a;font-weight:normal;">27</div><div class="b" style="left:0.0px;top:619.0px;width:23.0px;height:1.0px;background:#e4e4e4;"></div><div class="b" style="left:23.0px;top:619.0px;width:1160.0px;height:1.0px;background:#dadada;"></div><div class="t" style="left:-138.5px;width:300px;text-align:center;top:606.5px;font-size:11.5px;color:#5a5a5a;font-weight:normal;">28</div><div class="b" style="left:24px;top:172.9px;width:60px;height:15px;overflow:hidden;"><div class="t" style="left:1.5px;top:2px;font-size:11px;color:#000;word-spacing:-0.6px;">productID</div></div><div class="b" style="left:85px;top:172.9px;width:469px;height:15px;overflow:hidden;"><div class="t" style="left:1.5px;top:2px;font-size:11px;color:#000;word-spacing:-0.6px;">productName</div></div><div class="b" style="left:555px;top:172.9px;width:104px;height:15px;overflow:hidden;"><div class="t" style="left:1.5px;top:2px;font-size:11px;color:#000;word-spacing:-0.6px;">productDepartment</div></div><div class="b" style="left:725px;top:172.9px;width:104px;height:15px;overflow:hidden;"><div class="t" style="left:1.5px;top:2px;font-size:11px;color:#000;word-spacing:-0.6px;">productDepartment</div></div><div class="t" style="left:-218.5px;width:300px;text-align:right;top:190.9px;font-size:11px;color:#000;">200002512</div><div class="b" style="left:85px;top:188.9px;width:469px;height:15px;overflow:hidden;"><div class="t" style="left:1.5px;top:2px;font-size:11px;color:#000;word-spacing:-0.6px;">Just FreshDirect Local Organic 2perc Reduced Fat Milk</div></div><div class="b" style="left:555px;top:188.9px;width:104px;height:15px;overflow:hidden;"><div class="t" style="left:1.5px;top:2px;font-size:11px;color:#000;word-spacing:-0.6px;">Dairy</div></div><div class="b" style="left:725px;top:188.9px;width:104px;height:15px;overflow:hidden;"><div class="t" style="left:1.5px;top:2px;font-size:11px;color:#000;word-spacing:-0.6px;">Dairy</div></div><div class="t" style="left:-218.5px;width:300px;text-align:right;top:206.9px;font-size:11px;color:#000;">200200418</div><div class="b" style="left:85px;top:204.9px;width:469px;height:15px;overflow:hidden;"><div class="t" style="left:1.5px;top:2px;font-size:11px;color:#000;word-spacing:-0.6px;">Red Seedless Grapes</div></div><div class="b" style="left:555px;top:204.9px;width:104px;height:15px;overflow:hidden;"><div class="t" style="left:1.5px;top:2px;font-size:11px;color:#000;word-spacing:-0.6px;">Produce</div></div><div class="b" style="left:725px;top:204.9px;width:104px;height:15px;overflow:hidden;"><div class="t" style="left:1.5px;top:2px;font-size:11px;color:#000;word-spacing:-0.6px;">Produce</div></div><div class="t" style="left:-218.5px;width:300px;text-align:right;top:222.9px;font-size:11px;color:#000;">200200888</div><div class="b" style="left:85px;top:220.9px;width:469px;height:15px;overflow:hidden;"><div class="t" style="left:1.5px;top:2px;font-size:11px;color:#000;word-spacing:-0.6px;">Tommy Atkins Mango</div></div><div class="b" style="left:555px;top:220.9px;width:104px;height:15px;overflow:hidden;"><div class="t" style="left:1.5px;top:2px;font-size:11px;color:#000;word-spacing:-0.6px;">Produce</div></div><div class="b" style="left:725px;top:220.9px;width:104px;height:15px;overflow:hidden;"><div class="t" style="left:1.5px;top:2px;font-size:11px;color:#000;word-spacing:-0.6px;">Deli and Cheese</div></div><div class="t" style="left:-218.5px;width:300px;text-align:right;top:238.9px;font-size:11px;color:#000;">200201391</div><div class="t" style="left:-218.5px;width:300px;text-align:right;top:254.9px;font-size:11px;color:#000;">200201493</div><div class="t" style="left:-218.5px;width:300px;text-align:right;top:270.9px;font-size:11px;color:#000;">200211210</div><div class="t" style="left:-218.5px;width:300px;text-align:right;top:286.9px;font-size:11px;color:#000;">200300218</div><div class="t" style="left:-218.5px;width:300px;text-align:right;top:302.9px;font-size:11px;color:#000;">300200102</div><div class="t" style="left:-218.5px;width:300px;text-align:right;top:318.9px;font-size:11px;color:#000;">300201023</div><div class="t" style="left:-218.5px;width:300px;text-align:right;top:334.9px;font-size:11px;color:#000;">300700321</div><div class="t" style="left:-218.5px;width:300px;text-align:right;top:350.9px;font-size:11px;color:#000;">300770001</div><div class="t" style="left:-218.5px;width:300px;text-align:right;top:366.9px;font-size:11px;color:#000;">400000803</div><div class="t" style="left:-218.5px;width:300px;text-align:right;top:382.9px;font-size:11px;color:#000;">400600010</div><div class="t" style="left:-218.5px;width:300px;text-align:right;top:398.9px;font-size:11px;color:#000;">200001030</div><div class="t" style="left:-218.5px;width:300px;text-align:right;top:414.9px;font-size:11px;color:#000;">300300481</div><div class="t" style="left:-218.5px;width:300px;text-align:right;top:430.9px;font-size:11px;color:#000;">300300999</div><div class="t" style="left:-218.5px;width:300px;text-align:right;top:446.9px;font-size:11px;color:#000;">400000210</div><div class="t" style="left:-218.5px;width:300px;text-align:right;top:462.9px;font-size:11px;color:#000;">400000333</div><div class="t" style="left:-218.5px;width:300px;text-align:right;top:478.9px;font-size:11px;color:#000;">400000512</div><div class="t" style="left:-218.5px;width:300px;text-align:right;top:494.9px;font-size:11px;color:#000;">300770020</div><div class="t" style="left:-218.5px;width:300px;text-align:right;top:510.9px;font-size:11px;color:#000;">301030010</div><div class="t" style="left:-218.5px;width:300px;text-align:right;top:526.9px;font-size:11px;color:#000;">900000120</div><div class="t" style="left:-218.5px;width:300px;text-align:right;top:542.9px;font-size:11px;color:#000;">200001024</div><div class="t" style="left:-218.5px;width:300px;text-align:right;top:558.9px;font-size:11px;color:#000;">200001102</div><div class="t" style="left:-218.5px;width:300px;text-align:right;top:574.9px;font-size:11px;color:#000;">200200103</div><div class="t" style="left:-218.5px;width:300px;text-align:right;top:590.9px;font-size:11px;color:#000;">200200519</div><div class="t" style="left:-218.5px;width:300px;text-align:right;top:606.9px;font-size:11px;color:#000;">200201001</div><div class="b" style="left:68.6px;top:172.0px;width:15.0px;height:14.5px;background:linear-gradient(#fdfdfd,#ececec);border:1px solid #b9b9b9;border-radius:2px;box-sizing:border-box;"></div><svg class="b" style="left:72.1px;top:176.8px" width="8" height="5" viewBox="0 0 8 5"><path d="M0 0 H8 L4.0 5Z" fill="#7a7a7a"/></svg><div class="b" style="left:538.5px;top:172.0px;width:15.0px;height:14.5px;background:linear-gradient(#fdfdfd,#ececec);border:1px solid #b9b9b9;border-radius:2px;box-sizing:border-box;"></div><svg class="b" style="left:542.0px;top:176.8px" width="8" height="5" viewBox="0 0 8 5"><path d="M0 0 H8 L4.0 5Z" fill="#7a7a7a"/></svg><div class="b" style="left:644.0px;top:172.0px;width:15.0px;height:14.5px;background:linear-gradient(#fdfdfd,#ececec);border:1px solid #b9b9b9;border-radius:2px;box-sizing:border-box;"></div><svg class="b" style="left:647.5px;top:176.8px" width="8" height="5" viewBox="0 0 8 5"><path d="M0 0 H8 L4.0 5Z" fill="#7a7a7a"/></svg><div class="b" style="left:25.8px;top:362.4px;width:62.0px;height:1.6px;background:repeating-linear-gradient(90deg,#19b020 0 7px,transparent 7px 12px);"></div><div class="b" style="left:25.8px;top:554.4px;width:62.0px;height:1.6px;background:repeating-linear-gradient(90deg,#19b020 0 7px,transparent 7px 12px);"></div><div class="b" style="left:22.4px;top:171.0px;width:2.0px;height:2.0px;background:#217346;"></div><div class="b" style="left:0.0px;top:618.0px;width:1160.0px;height:26.3px;background:linear-gradient(#f4f4f4,#ececec);border-top:1px solid #c9c9c9;box-sizing:border-box;"></div><svg class="b" style="left:14.8px;top:627.0px" width="8" height="10" viewBox="0 0 8 10"><path d="M7.5 0 V10 L0 5Z" fill="#8f8f8f"/></svg><svg class="b" style="left:37.9px;top:627.0px" width="8" height="10" viewBox="0 0 8 10"><path d="M0.5 0 V10 L8 5Z" fill="#8f8f8f"/></svg><div class="b" style="left:0.0px;top:644.3px;width:1160.0px;height:22.7px;background:linear-gradient(#e6e6e6,#d6d6d6);border-top:1px solid #c2c2c2;box-sizing:border-box;"></div><div class="t" style="left:14.3px;top:651.0px;font-size:11.8px;color:#6a6a6a;font-weight:normal;">Select destination and press ENTER or choose Paste</div></div><div class="win" style="left:54px;top:228px;width:1160px;height:600px;border-radius:5px;box-shadow:0 2px 14px rgba(0,0,0,0.35);background:#fff;"><div class="b" style="left:0.0px;top:0.0px;width:1160.0px;height:50.0px;background:#52a07b;"></div><div class="b" style="left:0.0px;top:49.0px;width:1160.0px;height:1.0px;background:#46906c;"></div><div class="b" style="left:13.0px;top:7.0px;width:12.0px;height:12.0px;border-radius:50%;background:#dcdcdc;box-shadow:inset 0 0 0 0.5px #8a9a90;"></div><div class="b" style="left:33.0px;top:7.0px;width:12.0px;height:12.0px;border-radius:50%;background:#dcdcdc;box-shadow:inset 0 0 0 0.5px #8a9a90;"></div><div class="b" style="left:53.0px;top:7.0px;width:12.0px;height:12.0px;border-radius:50%;background:#dcdcdc;box-shadow:inset 0 0 0 0.5px #8a9a90;"></div><div class="b" style="left:17.0px;top:11.0px;width:4.0px;height:4.0px;border-radius:50%;background:#555;"></div><div class="b" style="left:78.0px;top:6.0px;width:1.0px;height:17.0px;background:rgba(0,0,0,0.12);"></div><svg class="b" style="left:95.0px;top:7.0px" width="16" height="14" viewBox="0 0 16 14"><rect x="0" y="0" width="16" height="14" rx="1.6" fill="#eef6f1"/><rect x="1.1" y="1.1" width="2.7" height="11.8" fill="#52a07b"/><circle cx="2.45" cy="2.6" r="0.65" fill="#eef6f1"/><circle cx="2.45" cy="4.6" r="0.65" fill="#eef6f1"/><circle cx="2.45" cy="6.6" r="0.65" fill="#eef6f1"/><path d="M5.9 2 H11 L13.6 4.6 V12 H5.9Z" fill="#52a07b"/><path d="M11 2.3 V4.6 H13.3Z" fill="#eef6f1"/></svg><svg class="b" style="left:127.0px;top:7.0px" width="14" height="14" viewBox="0 0 14 14"><path d="M1.5 0 H12.5 Q14 0 14 1.5 V12.5 Q14 14 12.5 14 H2 L0 12 V1.5 Q0 0 1.5 0Z" fill="#eef6f1"/><rect x="2" y="1.5" width="10" height="5" fill="#52a07b"/><rect x="3.9" y="9.2" width="6.5" height="4.8" fill="#52a07b"/><rect x="5.1" y="11.3" width="1.8" height="2.7" fill="#eef6f1"/></svg><svg class="b" style="left:157.0px;top:9.0px" width="16" height="11" viewBox="0 0 16 11"><path d="M0 2.3 V10.3 H8Z" fill="#eef6f1"/><path d="M4.6 6.2 A4.4 4.4 0 1 1 12.3 9.6" fill="none" stroke="#eef6f1" stroke-width="2"/></svg><svg class="b" style="left:180.2px;top:12.2px" width="5" height="4" viewBox="0 0 5 4"><path d="M0 0 H5 L2.5 4Z" fill="#eef6f1"/></svg><svg class="b" style="left:200.0px;top:8.0px" width="13" height="13.5" viewBox="0 0 13 13.5"><path d="M9.6 4.2 A4.9 4.9 0 1 1 4.5 3.2" fill="none" stroke="#7dbb9c" stroke-width="2"/><path d="M6.5 0.3 H12.2 V6Z" fill="#7dbb9c"/></svg><svg class="b" style="left:546.7px;top:6.5px" width="15" height="15" viewBox="0 0 15 15"><path d="M3 0.5 H10.3 L14 4.2 V14.5 H3Z" fill="#fff"/><path d="M10.3 0.8 V4.2 H13.7" fill="none" stroke="#c9c9c9" stroke-width="0.8"/><path d="M9.3 8.5 H12 M9.3 10.5 H12 M11.5 8.5 V12" stroke="#c4c4c4" stroke-width="0.8"/><rect x="0" y="2.6" width="7.8" height="9.8" fill="#8fc6a8"/><path d="M1.9 5 L5.9 10 M5.9 5 L1.9 10" stroke="#fff" stroke-width="1.3"/></svg><div class="t" style="left:565.0px;top:8.6px;font-size:13px;color:#f0f7f3;font-weight:normal;letter-spacing:0.3px;-webkit-text-stroke:0.3px currentColor;">orders</div><div class="b" style="left:11.0px;top:28.0px;width:58.0px;height:22.0px;background:#f5f5f5;border-radius:3px 3px 0 0;"></div><div class="t" style="left:22.7px;top:33.0px;font-size:13px;color:#4f9e77;font-weight:normal;-webkit-text-stroke:0.15px currentColor;">Home</div><div class="t" style="left:84.0px;top:33.0px;font-size:13px;color:#eef6f1;font-weight:normal;-webkit-text-stroke:0.15px currentColor;">Insert</div><div class="t" style="left:144.5px;top:33.0px;font-size:13px;color:#eef6f1;font-weight:normal;-webkit-text-stroke:0.15px currentColor;">Page Layout</div><div class="t" style="left:246.0px;top:33.0px;font-size:13px;color:#eef6f1;font-weight:normal;-webkit-text-stroke:0.15px currentColor;">Formulas</div><div class="t" style="left:328.0px;top:33.0px;font-size:13px;color:#eef6f1;font-weight:normal;-webkit-text-stroke:0.15px currentColor;">Data</div><div class="t" style="left:383.0px;top:33.0px;font-size:13px;color:#eef6f1;font-weight:normal;-webkit-text-stroke:0.15px currentColor;">Review</div><div class="t" style="left:453.0px;top:33.0px;font-size:13px;color:#eef6f1;font-weight:normal;-webkit-text-stroke:0.15px currentColor;">View</div><div class="b" style="left:0.0px;top:50.0px;width:1160.0px;height:70.0px;background:#f5f5f5;"></div><div class="b" style="left:0.0px;top:120.0px;width:1160.0px;height:1.0px;background:#d3d3d3;"></div><svg class="b" style="left:14.0px;top:56.0px" width="26" height="32" viewBox="0 0 26 32"><rect x="1" y="3.8" width="21.8" height="25.3" rx="2" fill="#ebb35c" stroke="#d79b43" stroke-width="0.8"/><path d="M5.3 8.6 V5.5 Q5.3 3.3 8 3.3 H10.5 Q11 1 12.1 1 Q13.2 1 13.7 3.3 H16.2 Q18.9 3.3 18.9 5.5 V8.6Z" fill="#6e6e6e"/><circle cx="12.1" cy="3" r="0.9" fill="#ebb35c"/><path d="M8.7 11.6 H18.3 L24.8 18.1 V30.6 H8.7Z" fill="#fff" stroke="#c6c6c6" stroke-width="0.9"/><path d="M18.3 11.6 V18.1 H24.8Z" fill="#ececec" stroke="#c6c6c6" stroke-width="0.8"/></svg><svg class="b" style="left:47.0px;top:70.6px" width="6" height="4" viewBox="0 0 6 4"><path d="M0 0 H6 L3.0 4Z" fill="#777"/></svg><div class="t" style="left:-118.0px;width:300px;text-align:center;top:93.7px;font-size:11px;color:#555;font-weight:normal;">Paste</div><svg class="b" style="left:66.0px;top:53.5px" width="16" height="17" viewBox="0 0 16 17"><path d="M3.6 0.8 L9.8 11 M12.4 0.8 L6.2 11" stroke="#555" stroke-width="1.9" fill="none" stroke-linecap="round"/><circle cx="4" cy="13.3" r="2.7" fill="#f5f5f5" stroke="#2f7de1" stroke-width="1.3"/><circle cx="12.2" cy="13.3" r="2.7" fill="#f5f5f5" stroke="#2f7de1" stroke-width="1.3"/></svg><svg class="b" style="left:66.5px;top:77.0px" width="15" height="16" viewBox="0 0 15 16"><path d="M4.9 0.5 H11.2 L14.2 3.5 V11.5 H4.9Z" fill="#fff" stroke="#bdbdbd" stroke-width="0.9"/><path d="M11.2 0.5 V3.5 H14.2" fill="none" stroke="#bdbdbd" stroke-width="0.8"/><path d="M0.5 4.2 H9.8 V15.4 H0.5Z" fill="#fff" stroke="#bdbdbd" stroke-width="0.9"/></svg><svg class="b" style="left:88.4px;top:83.0px" width="6" height="4" viewBox="0 0 6 4"><path d="M0 0 H6 L3.0 4Z" fill="#777"/></svg><svg class="b" style="left:65.5px;top:100.5px" width="17" height="15.5" viewBox="0 0 17 15.5"><path d="M12.2 1.6 Q13.6 0.2 15 1.2 Q16.4 2.5 15 4 L12 7 L9.8 4.8Z" fill="#efefef" stroke="#9a9a9a" stroke-width="0.8"/><path d="M9.8 4.8 L12 7 L10.3 8.7 L8.1 6.5Z" fill="#d2d2d2" stroke="#9a9a9a" stroke-width="0.7"/><path d="M8.1 6.5 L10.3 8.7 Q9.5 11.5 6.3 14.8 L0.5 11.4 Q3.5 8 8.1 6.5Z" fill="#c8b596"/><path d="M0.5 11.4 L6.3 14.8 Q5.8 15.4 5 15.2 Q2 14 0.3 12.2Z" fill="#2f7de1"/><path d="M2.2 9.6 L7.4 13.2 L6.3 14.8 L0.5 11.4Z" fill="#2f7de1"/></svg><div class="b" style="left:106.6px;top:54.0px;width:1.0px;height:62.0px;background:#d0d0d0;"></div><div class="b" style="left:115.5px;top:58.0px;width:110.0px;height:23.5px;background:#fff;border:1px solid #cfcfcf;border-radius:4px;box-sizing:border-box;"></div><div class="t" style="left:120.5px;top:64.2px;font-size:12.5px;color:#555;font-weight:normal;">Calibri (Body)</div><div class="b" style="left:211.6px;top:62.0px;width:1.0px;height:15.0px;background:#e3e3e3;"></div><svg class="b" style="left:215.5px;top:68.0px" width="6" height="4" viewBox="0 0 6 4"><path d="M0 0 H6 L3.0 4Z" fill="#808080"/></svg><div class="b" style="left:230.7px;top:58.0px;width:46.6px;height:23.5px;background:#fff;border:1px solid #cfcfcf;border-radius:4px;box-sizing:border-box;"></div><div class="t" style="left:236.0px;top:64.2px;font-size:12.5px;color:#555;font-weight:normal;">12</div><div class="b" style="left:263.6px;top:62.0px;width:1.0px;height:15.0px;background:#e3e3e3;"></div><svg class="b" style="left:267.5px;top:68.0px" width="6" height="4" viewBox="0 0 6 4"><path d="M0 0 H6 L3.0 4Z" fill="#808080"/></svg><div class="b" style="left:282.7px;top:58.0px;width:57.3px;height:23.5px;background:linear-gradient(#ffffff,#f6f6f6);border:1px solid #c8c8c8;border-radius:4px;box-sizing:border-box;"></div><div class="b" style="left:312.0px;top:59.0px;width:1.0px;height:21.5px;background:#d8d8d8;"></div><div class="t" style="left:287.5px;top:62.3px;font-size:15px;color:#777;font-weight:normal;">A</div><svg class="b" style="left:300.0px;top:67.0px" width="7.5" height="4" viewBox="0 0 7.5 4"><path d="M0 4 H7.5 L3.75 0Z" fill="#4a90e2"/></svg><div class="t" style="left:317.5px;top:63.6px;font-size:12.5px;color:#777;font-weight:normal;">A</div><svg class="b" style="left:328.0px;top:68.3px" width="7.5" height="4" viewBox="0 0 7.5 4"><path d="M0 0 H7.5 L3.75 4Z" fill="#4a90e2"/></svg><div class="b" style="left:115.5px;top:88.6px;width:96.8px;height:23.0px;background:linear-gradient(#ffffff,#f6f6f6);border:1px solid #c8c8c8;border-radius:4px;box-sizing:border-box;"></div><div class="b" style="left:144.0px;top:89.6px;width:1.0px;height:21.0px;background:#d8d8d8;"></div><div class="b" style="left:173.3px;top:89.6px;width:1.0px;height:21.0px;background:#d8d8d8;"></div><div class="b" style="left:200.3px;top:91.6px;width:1.0px;height:17.0px;background:#dedede;"></div><div class="t" style="left:-20.0px;width:300px;text-align:center;top:94.8px;font-size:12px;color:#777;font-weight:bold;">B</div><div class="t" style="left:8.6px;width:300px;text-align:center;top:92.8px;font-size:15px;color:#777;font-weight:normal;font-style:italic;font-family:Liberation Serif;-webkit-text-stroke:0.4px currentColor;">I</div><div class="t" style="left:36.5px;width:300px;text-align:center;top:93.0px;font-size:13px;color:#777;font-weight:normal;-webkit-text-stroke:0.3px currentColor;">U</div><div class="b" style="left:181.5px;top:106.3px;width:10.0px;height:1.2px;background:#777;"></div><svg class="b" style="left:203.5px;top:98.0px" width="6" height="4" viewBox="0 0 6 4"><path d="M0 0 H6 L3.0 4Z" fill="#808080"/></svg><div class="b" style="left:217.7px;top:88.6px;width:38.5px;height:23.0px;background:linear-gradient(#ffffff,#f6f6f6);border:1px solid #c8c8c8;border-radius:4px;box-sizing:border-box;"></div><svg class="b" style="left:222.5px;top:90.5px" width="18" height="17" viewBox="0 0 18 17"><path d="M0.5 0.5 H17.5 M0.5 0.5 V15 M17.5 0.5 V15 M9 0.5 V15 M0.5 8 H17.5" stroke="#9a9a9a" stroke-width="0.9" stroke-dasharray="0.9 1.9" fill="none"/><path d="M0 16 H18" stroke="#555" stroke-width="1.3"/></svg><div class="b" style="left:244.5px;top:91.6px;width:1.0px;height:17.0px;background:#dedede;"></div><svg class="b" style="left:247.5px;top:98.0px" width="6" height="4" viewBox="0 0 6 4"><path d="M0 0 H6 L3.0 4Z" fill="#808080"/></svg><div class="b" style="left:261.7px;top:88.6px;width:78.3px;height:23.0px;background:linear-gradient(#ffffff,#f6f6f6);border:1px solid #c8c8c8;border-radius:4px;box-sizing:border-box;"></div><svg class="b" style="left:268.0px;top:89.5px" width="17" height="14" viewBox="0 0 17 14"><g transform="rotate(-40 7 8)"><path d="M2.5 4.5 H11.5 V11.5 Q11.5 13 10 13 H4 Q2.5 13 2.5 11.5Z" fill="#fff" stroke="#777" stroke-width="1.1"/><path d="M4 4.5 V2.5 Q7 -0.5 10 2.5 V4.5" fill="none" stroke="#777" stroke-width="1"/></g><path d="M11.5 5 Q15.5 6 15 11.5" stroke="#4a90e2" stroke-width="1.8" fill="none"/></svg><div class="b" style="left:267.0px;top:104.0px;width:18.0px;height:4.6px;background:#f2ec3a;border-radius:1px;"></div><div class="b" style="left:289.6px;top:89.6px;width:1.0px;height:21.0px;background:#d8d8d8;"></div><svg class="b" style="left:292.5px;top:98.0px" width="6" height="4" viewBox="0 0 6 4"><path d="M0 0 H6 L3.0 4Z" fill="#808080"/></svg><div class="b" style="left:301.5px;top:89.6px;width:1.0px;height:21.0px;background:#d8d8d8;"></div><div class="t" style="left:165.2px;width:300px;text-align:center;top:90.4px;font-size:13.5px;color:#777;font-weight:normal;">A</div><div class="b" style="left:306.0px;top:104.0px;width:18.0px;height:4.6px;background:#f0484a;border-radius:1px;"></div><div class="b" style="left:328.2px;top:89.6px;width:1.0px;height:21.0px;background:#d8d8d8;"></div><svg class="b" style="left:331.0px;top:98.0px" width="6" height="4" viewBox="0 0 6 4"><path d="M0 0 H6 L3.0 4Z" fill="#808080"/></svg><div class="b" style="left:349.4px;top:54.0px;width:1.0px;height:62.0px;background:#d0d0d0;"></div><div class="b" style="left:358.6px;top:58.0px;width:87.1px;height:23.5px;background:linear-gradient(#ffffff,#f6f6f6);border:1px solid #c8c8c8;border-radius:4px;box-sizing:border-box;"></div><div class="b" style="left:416.4px;top:58.0px;width:29.3px;height:23.5px;background:linear-gradient(#d9d9d9,#d2d2d2);border:1px solid #b9b9b9;border-left:none;border-radius:0 4px 4px 0;box-sizing:border-box;"></div><div class="b" style="left:387.2px;top:59.3px;width:1.0px;height:21.0px;background:#d8d8d8;"></div><div class="b" style="left:366.5px;top:63.5px;width:12.5px;height:1.2px;background:#777;"></div><div class="b" style="left:366.5px;top:66.5px;width:12.5px;height:1.2px;background:#777;"></div><div class="b" style="left:395.5px;top:67.0px;width:12.5px;height:1.2px;background:#777;"></div><div class="b" style="left:395.5px;top:70.0px;width:12.5px;height:1.2px;background:#777;"></div><div class="b" style="left:424.5px;top:71.5px;width:12.5px;height:1.2px;background:#777;"></div><div class="b" style="left:424.5px;top:74.5px;width:12.5px;height:1.2px;background:#777;"></div><div class="b" style="left:450.4px;top:58.0px;width:36.0px;height:23.5px;background:linear-gradient(#ffffff,#f6f6f6);border:1px solid #c8c8c8;border-radius:4px;box-sizing:border-box;"></div><svg class="b" style="left:455.0px;top:61.0px" width="26" height="20" viewBox="0 0 26 20"><text x="1" y="12.5" font-size="12" font-family="Liberation Sans" fill="#777" transform="rotate(-45 8 8)">ab</text><path d="M7.9 16.8 L16.8 8" stroke="#4a90e2" stroke-width="1.2"/><path d="M13.6 7.2 L18.4 6.3 L17.6 11.2Z" fill="#4a90e2"/></svg><svg class="b" style="left:477.0px;top:68.0px" width="6" height="4" viewBox="0 0 6 4"><path d="M0 0 H6 L3.0 4Z" fill="#808080"/></svg><div class="b" style="left:358.6px;top:88.6px;width:87.1px;height:23.0px;background:linear-gradient(#ffffff,#f6f6f6);border:1px solid #c8c8c8;border-radius:4px;box-sizing:border-box;"></div><div class="b" style="left:387.2px;top:89.6px;width:1.0px;height:21.0px;background:#d8d8d8;"></div><div class="b" style="left:416.4px;top:89.6px;width:1.0px;height:21.0px;background:#d8d8d8;"></div><div class="b" style="left:367.0px;top:94.0px;width:13.0px;height:1.1px;background:#777;"></div><div class="b" style="left:367.0px;top:97.5px;width:9.0px;height:1.1px;background:#777;"></div><div class="b" style="left:367.0px;top:101.0px;width:13.0px;height:1.1px;background:#777;"></div><div class="b" style="left:367.0px;top:104.5px;width:9.0px;height:1.1px;background:#777;"></div><div class="b" style="left:395.0px;top:94.0px;width:13.0px;height:1.1px;background:#777;"></div><div class="b" style="left:397.0px;top:97.5px;width:9.0px;height:1.1px;background:#777;"></div><div class="b" style="left:395.0px;top:101.0px;width:13.0px;height:1.1px;background:#777;"></div><div class="b" style="left:397.0px;top:104.5px;width:9.0px;height:1.1px;background:#777;"></div><div class="b" style="left:424.0px;top:94.0px;width:13.0px;height:1.1px;background:#777;"></div><div class="b" style="left:428.0px;top:97.5px;width:9.0px;height:1.1px;background:#777;"></div><div class="b" style="left:424.0px;top:101.0px;width:13.0px;height:1.1px;background:#777;"></div><div class="b" style="left:428.0px;top:104.5px;width:9.0px;height:1.1px;background:#777;"></div><div class="b" style="left:450.4px;top:88.6px;width:58.1px;height:23.0px;background:linear-gradient(#ffffff,#f6f6f6);border:1px solid #c8c8c8;border-radius:4px;box-sizing:border-box;"></div><div class="b" style="left:479.7px;top:89.6px;width:1.0px;height:21.0px;background:#d8d8d8;"></div><svg class="b" style="left:455.0px;top:93.5px" width="19" height="13" viewBox="0 0 19 13"><path d="M0.8 6.4 L5 2.6 V4.7 H8.6 V8.1 H5 V10.2Z" fill="#4a90e2"/><path d="M7.9 1.8 H18.3 M10.4 4.8 H18.3 M10.4 7.9 H18.3 M7.9 10.9 H18.3" stroke="#777" stroke-width="1.2"/></svg><svg class="b" style="left:485.0px;top:93.5px" width="19" height="13" viewBox="0 0 19 13"><path d="M8.6 6.4 L4.4 2.6 V4.7 H0.8 V8.1 H4.4 V10.2Z" fill="#4a90e2"/><path d="M7.2 1.8 H17 M9.6 4.8 H17 M9.6 7.9 H17 M7.2 10.9 H17" stroke="#777" stroke-width="1.2"/></svg><div class="b" style="left:517.8px;top:54.0px;width:1.0px;height:62.0px;background:#d0d0d0;"></div><svg class="b" style="left:530.0px;top:63.0px" width="22" height="15" viewBox="0 0 22 15"><rect x="1.2" y="1.1" width="10.4" height="12.4" rx="0.8" fill="#fff" stroke="#8a8a8a" stroke-width="0.9"/><path d="M3 4.4 H15.5 M3 10.2 H7" stroke="#777" stroke-width="1.1"/><path d="M15 4.4 Q19 4.6 19 8 Q19 11.2 15.5 11.2" stroke="#4a90e2" stroke-width="2" fill="none"/><path d="M16.2 8.3 L12.8 11.2 L16.2 14.2Z" fill="#4a90e2"/></svg><svg class="b" style="left:531.0px;top:91.0px" width="18" height="17" viewBox="0 0 18 17"><rect x="0.5" y="0.5" width="16" height="15" fill="#fafafa" stroke="#cfcfcf" stroke-width="1"/><path d="M0.5 5.5 H16.5 M0.5 10.5 H16.5 M8.5 0.5 V5 M8.5 11 V15.5" stroke="#dcdcdc" stroke-width="1"/><path d="M3.5 8 H13.5 M3.5 8 L5.5 6.3 M3.5 8 L5.5 9.7 M13.5 8 L11.5 6.3 M13.5 8 L11.5 9.7" stroke="#9cc3f0" stroke-width="1"/></svg><svg class="b" style="left:556.5px;top:98.0px" width="6" height="4" viewBox="0 0 6 4"><path d="M0 0 H6 L3.0 4Z" fill="#aaa"/></svg><div class="b" style="left:574.5px;top:54.0px;width:1.0px;height:62.0px;background:#d0d0d0;"></div><div class="b" style="left:583.6px;top:58.0px;width:160.8px;height:23.5px;background:#fff;border:1px solid #cfcfcf;border-radius:4px;box-sizing:border-box;"></div><div class="t" style="left:588.6px;top:64.2px;font-size:12.5px;color:#555;font-weight:normal;">General</div><div class="b" style="left:730.8px;top:62.0px;width:1.0px;height:15.0px;background:#e3e3e3;"></div><svg class="b" style="left:734.5px;top:68.0px" width="6" height="4" viewBox="0 0 6 4"><path d="M0 0 H6 L3.0 4Z" fill="#808080"/></svg><div class="b" style="left:583.6px;top:88.6px;width:98.2px;height:23.0px;background:linear-gradient(#ffffff,#f6f6f6);border:1px solid #c8c8c8;border-radius:4px;box-sizing:border-box;"></div><div class="b" style="left:611.3px;top:92.0px;width:1.0px;height:15.0px;background:#e3e3e3;"></div><div class="b" style="left:623.7px;top:89.6px;width:1.0px;height:21.0px;background:#d8d8d8;"></div><div class="b" style="left:652.5px;top:89.6px;width:1.0px;height:21.0px;background:#d8d8d8;"></div><div class="t" style="left:594.0px;top:93.6px;font-size:14px;color:#777;font-weight:normal;">$</div><svg class="b" style="left:614.5px;top:98.0px" width="6" height="4" viewBox="0 0 6 4"><path d="M0 0 H6 L3.0 4Z" fill="#808080"/></svg><div class="t" style="left:488.5px;width:300px;text-align:center;top:93.3px;font-size:15px;color:#777;font-weight:normal;">%</div><svg class="b" style="left:662.0px;top:93.0px" width="10" height="14" viewBox="0 0 10 14"><path d="M2.5 2 Q8 3.5 7.5 8 Q7 11.5 3 13 Q5.5 10 5 7.5 Q4.5 5 2.5 4.5 Z" fill="#777"/></svg><div class="b" style="left:686.3px;top:88.6px;width:58.1px;height:23.0px;background:linear-gradient(#ffffff,#f6f6f6);border:1px solid #c8c8c8;border-radius:4px;box-sizing:border-box;"></div><div class="b" style="left:715.2px;top:89.6px;width:1.0px;height:21.0px;background:#d8d8d8;"></div><svg class="b" style="left:693.0px;top:93.0px" width="20" height="15" viewBox="0 0 20 15"><path d="M0 4 L4.5 0.5 V2.5 H7.5 V5.5 H4.5 V7.5Z" fill="#3b88e8"/><text x="8" y="7.5" font-size="9" font-family="Liberation Sans" fill="#777">.0</text><text x="5" y="15" font-size="9" font-family="Liberation Sans" fill="#777">.00</text></svg><svg class="b" style="left:721.0px;top:93.0px" width="20" height="15" viewBox="0 0 20 15"><text x="5.5" y="7.5" font-size="9" font-family="Liberation Sans" fill="#777">.00</text><path d="M9 11.5 L4.5 8 V10 H0.5 V13 H4.5 V15Z" fill="#3b88e8"/><text x="10" y="15" font-size="9" font-family="Liberation Sans" fill="#777">.0</text></svg><div class="b" style="left:753.5px;top:54.0px;width:1.0px;height:62.0px;background:#d0d0d0;"></div><svg class="b" style="left:772.0px;top:59.5px" width="31" height="29" viewBox="0 0 31 29"><rect x="0.5" y="0.6" width="26" height="24.2" rx="1" fill="#fff" stroke="#c9c9c9" stroke-width="0.9"/><path d="M0.5 6.65 H26.5 M0.5 12.7 H26.5 M0.5 18.75 H26.5 M7 0.6 V24.8 M13 0.6 V24.8 M19.5 0.6 V24.8" stroke="#dcdcdc" stroke-width="0.8"/><rect x="7.2" y="0.9" width="5.6" height="5.6" fill="#f5a3aa"/><rect x="7.2" y="6.9" width="9.8" height="5.6" fill="#8fc0f3"/><rect x="7.2" y="12.9" width="12.2" height="5.6" fill="#f5a3aa"/><rect x="7.2" y="18.9" width="5.6" height="5.6" fill="#8fc0f3"/><rect x="14.3" y="14.7" width="15.2" height="13.3" rx="1" fill="#fff" stroke="#aaa" stroke-width="0.9"/><text x="21.9" y="25.5" font-size="13" font-family="Liberation Sans" text-anchor="middle" fill="#555">≠</text></svg><svg class="b" style="left:805.3px;top:70.6px" width="6" height="4" viewBox="0 0 6 4"><path d="M0 0 H6 L3.0 4Z" fill="#808080"/></svg><div class="t" style="left:641.6px;width:300px;text-align:center;top:93.7px;font-size:11px;color:#555;font-weight:normal;">Conditional</div><div class="t" style="left:641.4px;width:300px;text-align:center;top:105.7px;font-size:11px;color:#555;font-weight:normal;">Formatting</div><svg class="b" style="left:828.0px;top:60.0px" width="36" height="31" viewBox="0 0 36 31"><rect x="1.1" y="1.2" width="26.6" height="22.2" rx="1" fill="#fff" stroke="#c9c9c9" stroke-width="0.9"/><rect x="7.6" y="6.8" width="19.8" height="16.3" fill="#deebf9"/><path d="M1.1 6.8 H27.7 M1.1 12.4 H27.7 M1.1 18 H27.7 M7.6 1.2 V23.4 M14.3 1.2 V23.4 M21 1.2 V23.4" stroke="#d3dde9" stroke-width="0.8"/><path d="M31 5.5 L19.5 18" stroke="#a9a9a9" stroke-width="5" stroke-linecap="round"/><path d="M31 5.5 L19.5 18" stroke="#f4f4f4" stroke-width="3.4" stroke-linecap="round"/><circle cx="18.3" cy="20.2" r="3.9" fill="#dcb878" stroke="#b99654" stroke-width="0.7"/><path d="M15.2 22.2 Q12.5 26.5 7.2 28.6 Q14.5 29.6 18.6 25.6 Q19.8 24.3 20.3 23.3Z" fill="#4a90e2"/></svg><svg class="b" style="left:865.0px;top:70.6px" width="6" height="4" viewBox="0 0 6 4"><path d="M0 0 H6 L3.0 4Z" fill="#808080"/></svg><div class="t" style="left:831.5px;top:93.7px;font-size:11px;color:#555;font-weight:normal;">Format</div><div class="t" style="left:828.3px;top:105.7px;font-size:11px;color:#555;font-weight:normal;">as Table</div><div class="b" style="left:0.0px;top:121.0px;width:2000.0px;height:26.0px;background:#fff;"></div><div class="t" style="left:10.0px;top:129.8px;font-size:12px;color:#555;font-weight:normal;">G9</div><svg class="b" style="left:73.0px;top:125.5px" width="7" height="18" viewBox="0 0 7 18"><path d="M0 5.5 L3.5 0 L7 5.5Z M0 12 H7 L3.5 17.5Z" fill="#8c8c8c"/></svg><div class="b" style="left:85.4px;top:120.0px;width:1.0px;height:27.0px;background:#d4d4d4;"></div><svg class="b" style="left:100.0px;top:129.0px" width="11" height="11" viewBox="0 0 11 11"><path d="M0.8 0.8 L10.2 10.2 M10.2 0.8 L0.8 10.2" stroke="#bdbdbd" stroke-width="1.6"/></svg><svg class="b" style="left:127.5px;top:128.5px" width="15" height="11" viewBox="0 0 15 11"><path d="M0.8 5.5 L5 9.8 L14 0.8" stroke="#c9c9c9" stroke-width="1.8" fill="none"/></svg><div class="t" style="left:158.5px;top:124.1px;font-size:17px;color:#444;font-weight:normal;font-family:Liberation Serif;letter-spacing:-0.5px;"><i>f</i><i>x</i></div><div class="b" style="left:180.0px;top:126.0px;width:1.0px;height:16.0px;background:#d9d9d9;"></div><div class="b" style="left:0.0px;top:147.0px;width:2000.0px;height:1.0px;background:#c4c4c4;"></div><div class="b" style="left:0.0px;top:148.0px;width:2000.0px;height:1.0px;background:#fbfbfb;"></div><div class="b" style="left:0.0px;top:149.0px;width:2000.0px;height:1.0px;background:#c8c8c8;"></div><div class="b" style="left:0.0px;top:150.0px;width:1160.0px;height:21.0px;background:linear-gradient(#f7f7f7,#efefef);"></div><div class="b" style="left:0.0px;top:171.0px;width:23.0px;height:2000.0px;background:#f6f6f6;"></div><svg class="b" style="left:6.0px;top:154.0px" width="15" height="15" viewBox="0 0 15 15"><path d="M15 0 V15 H0Z" fill="#dcdcdc"/></svg><div class="t" style="left:-90.5px;width:300px;text-align:center;top:155.6px;font-size:11.5px;color:#5c5c5c;font-weight:normal;">A</div><div class="t" style="left:-22.5px;width:300px;text-align:center;top:155.6px;font-size:11.5px;color:#5c5c5c;font-weight:normal;">B</div><div class="t" style="left:47.0px;width:300px;text-align:center;top:155.6px;font-size:11.5px;color:#5c5c5c;font-weight:normal;">C</div><div class="t" style="left:106.0px;width:300px;text-align:center;top:155.6px;font-size:11.5px;color:#5c5c5c;font-weight:normal;">D</div><div class="t" style="left:145.0px;width:300px;text-align:center;top:155.6px;font-size:11.5px;color:#5c5c5c;font-weight:normal;">E</div><div class="t" style="left:196.0px;width:300px;text-align:center;top:155.6px;font-size:11.5px;color:#5c5c5c;font-weight:normal;">F</div><div class="t" style="left:261.5px;width:300px;text-align:center;top:155.6px;font-size:11.5px;color:#5c5c5c;font-weight:normal;">G</div><div class="t" style="left:326.5px;width:300px;text-align:center;top:155.6px;font-size:11.5px;color:#5c5c5c;font-weight:normal;">H</div><div class="t" style="left:391.5px;width:300px;text-align:center;top:155.6px;font-size:11.5px;color:#5c5c5c;font-weight:normal;">I</div><div class="t" style="left:456.5px;width:300px;text-align:center;top:155.6px;font-size:11.5px;color:#5c5c5c;font-weight:normal;">J</div><div class="t" style="left:521.5px;width:300px;text-align:center;top:155.6px;font-size:11.5px;color:#5c5c5c;font-weight:normal;">K</div><div class="t" style="left:586.5px;width:300px;text-align:center;top:155.6px;font-size:11.5px;color:#5c5c5c;font-weight:normal;">L</div><div class="t" style="left:651.5px;width:300px;text-align:center;top:155.6px;font-size:11.5px;color:#5c5c5c;font-weight:normal;">M</div><div class="t" style="left:716.5px;width:300px;text-align:center;top:155.6px;font-size:11.5px;color:#5c5c5c;font-weight:normal;">N</div><div class="t" style="left:781.5px;width:300px;text-align:center;top:155.6px;font-size:11.5px;color:#5c5c5c;font-weight:normal;">O</div><div class="b" style="left:23.0px;top:150.0px;width:1.0px;height:2000.0px;background:#c6c6c6;"></div><div class="b" style="left:96.0px;top:150.0px;width:1.0px;height:21.0px;background:#dedede;"></div><div class="b" style="left:96.0px;top:171.0px;width:1.0px;height:2000.0px;background:#dadada;"></div><div class="b" style="left:159.0px;top:150.0px;width:1.0px;height:21.0px;background:#dedede;"></div><div class="b" style="left:159.0px;top:171.0px;width:1.0px;height:2000.0px;background:#dadada;"></div><div class="b" style="left:235.0px;top:150.0px;width:1.0px;height:21.0px;background:#dedede;"></div><div class="b" style="left:235.0px;top:171.0px;width:1.0px;height:2000.0px;background:#dadada;"></div><div class="b" style="left:277.0px;top:150.0px;width:1.0px;height:21.0px;background:#dedede;"></div><div class="b" style="left:277.0px;top:171.0px;width:1.0px;height:2000.0px;background:#dadada;"></div><div class="b" style="left:313.0px;top:150.0px;width:1.0px;height:21.0px;background:#dedede;"></div><div class="b" style="left:313.0px;top:171.0px;width:1.0px;height:2000.0px;background:#dadada;"></div><div class="b" style="left:379.0px;top:150.0px;width:1.0px;height:21.0px;background:#dedede;"></div><div class="b" style="left:379.0px;top:171.0px;width:1.0px;height:2000.0px;background:#dadada;"></div><div class="b" style="left:444.0px;top:150.0px;width:1.0px;height:21.0px;background:#dedede;"></div><div class="b" style="left:444.0px;top:171.0px;width:1.0px;height:2000.0px;background:#dadada;"></div><div class="b" style="left:509.0px;top:150.0px;width:1.0px;height:21.0px;background:#dedede;"></div><div class="b" style="left:509.0px;top:171.0px;width:1.0px;height:2000.0px;background:#dadada;"></div><div class="b" style="left:574.0px;top:150.0px;width:1.0px;height:21.0px;background:#dedede;"></div><div class="b" style="left:574.0px;top:171.0px;width:1.0px;height:2000.0px;background:#dadada;"></div><div class="b" style="left:639.0px;top:150.0px;width:1.0px;height:21.0px;background:#dedede;"></div><div class="b" style="left:639.0px;top:171.0px;width:1.0px;height:2000.0px;background:#dadada;"></div><div class="b" style="left:704.0px;top:150.0px;width:1.0px;height:21.0px;background:#dedede;"></div><div class="b" style="left:704.0px;top:171.0px;width:1.0px;height:2000.0px;background:#dadada;"></div><div class="b" style="left:769.0px;top:150.0px;width:1.0px;height:21.0px;background:#dedede;"></div><div class="b" style="left:769.0px;top:171.0px;width:1.0px;height:2000.0px;background:#dadada;"></div><div class="b" style="left:834.0px;top:150.0px;width:1.0px;height:21.0px;background:#dedede;"></div><div class="b" style="left:834.0px;top:171.0px;width:1.0px;height:2000.0px;background:#dadada;"></div><div class="b" style="left:899.0px;top:150.0px;width:1.0px;height:21.0px;background:#dedede;"></div><div class="b" style="left:899.0px;top:171.0px;width:1.0px;height:2000.0px;background:#dadada;"></div><div class="b" style="left:964.0px;top:150.0px;width:1.0px;height:21.0px;background:#dedede;"></div><div class="b" style="left:964.0px;top:171.0px;width:1.0px;height:2000.0px;background:#dadada;"></div><div class="b" style="left:0.0px;top:171.0px;width:1160.0px;height:1.0px;background:#c6c6c6;"></div><div class="b" style="left:0.0px;top:187.0px;width:23.0px;height:1.0px;background:#e4e4e4;"></div><div class="b" style="left:23.0px;top:187.0px;width:1160.0px;height:1.0px;background:#dadada;"></div><div class="t" style="left:-138.5px;width:300px;text-align:center;top:174.5px;font-size:11.5px;color:#5a5a5a;font-weight:normal;">1</div><div class="b" style="left:0.0px;top:203.0px;width:23.0px;height:1.0px;background:#e4e4e4;"></div><div class="b" style="left:23.0px;top:203.0px;width:1160.0px;height:1.0px;background:#dadada;"></div><div class="t" style="left:-138.5px;width:300px;text-align:center;top:190.5px;font-size:11.5px;color:#5a5a5a;font-weight:normal;">2</div><div class="b" style="left:0.0px;top:219.0px;width:23.0px;height:1.0px;background:#e4e4e4;"></div><div class="b" style="left:23.0px;top:219.0px;width:1160.0px;height:1.0px;background:#dadada;"></div><div class="t" style="left:-138.5px;width:300px;text-align:center;top:206.5px;font-size:11.5px;color:#5a5a5a;font-weight:normal;">3</div><div class="b" style="left:0.0px;top:235.0px;width:23.0px;height:1.0px;background:#e4e4e4;"></div><div class="b" style="left:23.0px;top:235.0px;width:1160.0px;height:1.0px;background:#dadada;"></div><div class="t" style="left:-138.5px;width:300px;text-align:center;top:222.5px;font-size:11.5px;color:#5a5a5a;font-weight:normal;">4</div><div class="b" style="left:0.0px;top:251.0px;width:23.0px;height:1.0px;background:#e4e4e4;"></div><div class="b" style="left:23.0px;top:251.0px;width:1160.0px;height:1.0px;background:#dadada;"></div><div class="t" style="left:-138.5px;width:300px;text-align:center;top:238.5px;font-size:11.5px;color:#5a5a5a;font-weight:normal;">5</div><div class="b" style="left:0.0px;top:267.0px;width:23.0px;height:1.0px;background:#e4e4e4;"></div><div class="b" style="left:23.0px;top:267.0px;width:1160.0px;height:1.0px;background:#dadada;"></div><div class="t" style="left:-138.5px;width:300px;text-align:center;top:254.5px;font-size:11.5px;color:#5a5a5a;font-weight:normal;">6</div><div class="b" style="left:0.0px;top:283.0px;width:23.0px;height:1.0px;background:#e4e4e4;"></div><div class="b" style="left:23.0px;top:283.0px;width:1160.0px;height:1.0px;background:#dadada;"></div><div class="t" style="left:-138.5px;width:300px;text-align:center;top:270.5px;font-size:11.5px;color:#5a5a5a;font-weight:normal;">7</div><div class="b" style="left:0.0px;top:299.0px;width:23.0px;height:1.0px;background:#e4e4e4;"></div><div class="b" style="left:23.0px;top:299.0px;width:1160.0px;height:1.0px;background:#dadada;"></div><div class="t" style="left:-138.5px;width:300px;text-align:center;top:286.5px;font-size:11.5px;color:#5a5a5a;font-weight:normal;">8</div><div class="b" style="left:0.0px;top:315.0px;width:23.0px;height:1.0px;background:#e4e4e4;"></div><div class="b" style="left:23.0px;top:315.0px;width:1160.0px;height:1.0px;background:#dadada;"></div><div class="t" style="left:-138.5px;width:300px;text-align:center;top:302.5px;font-size:11.5px;color:#5a5a5a;font-weight:normal;">9</div><div class="b" style="left:0.0px;top:331.0px;width:23.0px;height:1.0px;background:#e4e4e4;"></div><div class="b" style="left:23.0px;top:331.0px;width:1160.0px;height:1.0px;background:#dadada;"></div><div class="t" style="left:-138.5px;width:300px;text-align:center;top:318.5px;font-size:11.5px;color:#5a5a5a;font-weight:normal;">10</div><div class="b" style="left:0.0px;top:347.0px;width:23.0px;height:1.0px;background:#e4e4e4;"></div><div class="b" style="left:23.0px;top:347.0px;width:1160.0px;height:1.0px;background:#dadada;"></div><div class="t" style="left:-138.5px;width:300px;text-align:center;top:334.5px;font-size:11.5px;color:#5a5a5a;font-weight:normal;">11</div><div class="b" style="left:0.0px;top:363.0px;width:23.0px;height:1.0px;background:#e4e4e4;"></div><div class="b" style="left:23.0px;top:363.0px;width:1160.0px;height:1.0px;background:#dadada;"></div><div class="t" style="left:-138.5px;width:300px;text-align:center;top:350.5px;font-size:11.5px;color:#5a5a5a;font-weight:normal;">12</div><div class="b" style="left:0.0px;top:379.0px;width:23.0px;height:1.0px;background:#e4e4e4;"></div><div class="b" style="left:23.0px;top:379.0px;width:1160.0px;height:1.0px;background:#dadada;"></div><div class="t" style="left:-138.5px;width:300px;text-align:center;top:366.5px;font-size:11.5px;color:#5a5a5a;font-weight:normal;">13</div><div class="b" style="left:0.0px;top:395.0px;width:23.0px;height:1.0px;background:#e4e4e4;"></div><div class="b" style="left:23.0px;top:395.0px;width:1160.0px;height:1.0px;background:#dadada;"></div><div class="t" style="left:-138.5px;width:300px;text-align:center;top:382.5px;font-size:11.5px;color:#5a5a5a;font-weight:normal;">14</div><div class="b" style="left:0.0px;top:411.0px;width:23.0px;height:1.0px;background:#e4e4e4;"></div><div class="b" style="left:23.0px;top:411.0px;width:1160.0px;height:1.0px;background:#dadada;"></div><div class="t" style="left:-138.5px;width:300px;text-align:center;top:398.5px;font-size:11.5px;color:#5a5a5a;font-weight:normal;">15</div><div class="b" style="left:0.0px;top:427.0px;width:23.0px;height:1.0px;background:#e4e4e4;"></div><div class="b" style="left:23.0px;top:427.0px;width:1160.0px;height:1.0px;background:#dadada;"></div><div class="t" style="left:-138.5px;width:300px;text-align:center;top:414.5px;font-size:11.5px;color:#5a5a5a;font-weight:normal;">16</div><div class="b" style="left:0.0px;top:443.0px;width:23.0px;height:1.0px;background:#e4e4e4;"></div><div class="b" style="left:23.0px;top:443.0px;width:1160.0px;height:1.0px;background:#dadada;"></div><div class="t" style="left:-138.5px;width:300px;text-align:center;top:430.5px;font-size:11.5px;color:#5a5a5a;font-weight:normal;">17</div><div class="b" style="left:0.0px;top:459.0px;width:23.0px;height:1.0px;background:#e4e4e4;"></div><div class="b" style="left:23.0px;top:459.0px;width:1160.0px;height:1.0px;background:#dadada;"></div><div class="t" style="left:-138.5px;width:300px;text-align:center;top:446.5px;font-size:11.5px;color:#5a5a5a;font-weight:normal;">18</div><div class="b" style="left:0.0px;top:475.0px;width:23.0px;height:1.0px;background:#e4e4e4;"></div><div class="b" style="left:23.0px;top:475.0px;width:1160.0px;height:1.0px;background:#dadada;"></div><div class="t" style="left:-138.5px;width:300px;text-align:center;top:462.5px;font-size:11.5px;color:#5a5a5a;font-weight:normal;">19</div><div class="b" style="left:0.0px;top:491.0px;width:23.0px;height:1.0px;background:#e4e4e4;"></div><div class="b" style="left:23.0px;top:491.0px;width:1160.0px;height:1.0px;background:#dadada;"></div><div class="t" style="left:-138.5px;width:300px;text-align:center;top:478.5px;font-size:11.5px;color:#5a5a5a;font-weight:normal;">20</div><div class="b" style="left:0.0px;top:507.0px;width:23.0px;height:1.0px;background:#e4e4e4;"></div><div class="b" style="left:23.0px;top:507.0px;width:1160.0px;height:1.0px;background:#dadada;"></div><div class="t" style="left:-138.5px;width:300px;text-align:center;top:494.5px;font-size:11.5px;color:#5a5a5a;font-weight:normal;">21</div><div class="b" style="left:24px;top:172.9px;width:72px;height:15px;overflow:hidden;"><div class="t" style="left:1.5px;top:2px;font-size:11px;color:#000;word-spacing:-0.6px;">orderID</div></div><div class="b" style="left:97px;top:172.9px;width:62px;height:15px;overflow:hidden;"><div class="t" style="left:1.5px;top:2px;font-size:11px;color:#000;word-spacing:-0.6px;">customerID</div></div><div class="b" style="left:160px;top:172.9px;width:75px;height:15px;overflow:hidden;"><div class="t" style="left:1.5px;top:2px;font-size:11px;color:#000;word-spacing:-0.6px;">orderInstance</div></div><div class="b" style="left:236px;top:172.9px;width:41px;height:15px;overflow:hidden;"><div class="t" style="left:1.5px;top:2px;font-size:11px;color:#000;word-spacing:-0.6px;">sales</div></div><div class="b" style="left:278px;top:172.9px;width:35px;height:15px;overflow:hidden;"><div class="t" style="left:1.5px;top:2px;font-size:11px;color:#000;word-spacing:-0.6px;">units</div></div><div class="t" style="left:-206.5px;width:300px;text-align:right;top:190.9px;font-size:11px;color:#000;">16377154275</div><div class="t" style="left:-143.5px;width:300px;text-align:right;top:190.9px;font-size:11px;color:#000;">155128362</div><div class="t" style="left:-67.5px;width:300px;text-align:right;top:190.9px;font-size:11px;color:#000;">4</div><div class="t" style="left:-25.5px;width:300px;text-align:right;top:190.9px;font-size:11px;color:#000;">78.18</div><div class="t" style="left:10.5px;width:300px;text-align:right;top:190.9px;font-size:11px;color:#000;">16.13</div><div class="t" style="left:-206.5px;width:300px;text-align:right;top:206.9px;font-size:11px;color:#000;">16377479625</div><div class="t" style="left:-143.5px;width:300px;text-align:right;top:206.9px;font-size:11px;color:#000;">163684420</div><div class="t" style="left:-67.5px;width:300px;text-align:right;top:206.9px;font-size:11px;color:#000;">2</div><div class="t" style="left:-25.5px;width:300px;text-align:right;top:206.9px;font-size:11px;color:#000;">112.2</div><div class="t" style="left:10.5px;width:300px;text-align:right;top:206.9px;font-size:11px;color:#000;">16.86</div><div class="t" style="left:-206.5px;width:300px;text-align:right;top:222.9px;font-size:11px;color:#000;">16377819834</div><div class="t" style="left:-143.5px;width:300px;text-align:right;top:222.9px;font-size:11px;color:#000;">156034258</div><div class="t" style="left:-67.5px;width:300px;text-align:right;top:222.9px;font-size:11px;color:#000;">1</div><div class="t" style="left:-25.5px;width:300px;text-align:right;top:222.9px;font-size:11px;color:#000;">43.5</div><div class="t" style="left:10.5px;width:300px;text-align:right;top:222.9px;font-size:11px;color:#000;">4</div><div class="t" style="left:-206.5px;width:300px;text-align:right;top:238.9px;font-size:11px;color:#000;">16377979791</div><div class="t" style="left:-143.5px;width:300px;text-align:right;top:238.9px;font-size:11px;color:#000;">155800884</div><div class="t" style="left:-67.5px;width:300px;text-align:right;top:238.9px;font-size:11px;color:#000;">5</div><div class="t" style="left:-25.5px;width:300px;text-align:right;top:238.9px;font-size:11px;color:#000;">137.81</div><div class="t" style="left:10.5px;width:300px;text-align:right;top:238.9px;font-size:11px;color:#000;">34.14</div><div class="t" style="left:-206.5px;width:300px;text-align:right;top:254.9px;font-size:11px;color:#000;">16377987516</div><div class="t" style="left:-206.5px;width:300px;text-align:right;top:270.9px;font-size:11px;color:#000;">16377995435</div><div class="t" style="left:-206.5px;width:300px;text-align:right;top:286.9px;font-size:11px;color:#000;">16377983355</div><div class="t" style="left:-206.5px;width:300px;text-align:right;top:302.9px;font-size:11px;color:#000;">16377991274</div><div class="t" style="left:-206.5px;width:300px;text-align:right;top:318.9px;font-size:11px;color:#000;">16377999193</div><div class="t" style="left:-206.5px;width:300px;text-align:right;top:334.9px;font-size:11px;color:#000;">16377987113</div><div class="t" style="left:-206.5px;width:300px;text-align:right;top:350.9px;font-size:11px;color:#000;">16377995032</div><div class="t" style="left:-206.5px;width:300px;text-align:right;top:366.9px;font-size:11px;color:#000;">16377982952</div><div class="t" style="left:-206.5px;width:300px;text-align:right;top:382.9px;font-size:11px;color:#000;">16377990871</div><div class="t" style="left:-206.5px;width:300px;text-align:right;top:398.9px;font-size:11px;color:#000;">16377998790</div><div class="t" style="left:-206.5px;width:300px;text-align:right;top:414.9px;font-size:11px;color:#000;">16377986710</div><div class="t" style="left:-206.5px;width:300px;text-align:right;top:430.9px;font-size:11px;color:#000;">16377994629</div><div class="t" style="left:-206.5px;width:300px;text-align:right;top:446.9px;font-size:11px;color:#000;">16377982549</div><div class="t" style="left:-206.5px;width:300px;text-align:right;top:462.9px;font-size:11px;color:#000;">16377990468</div><div class="t" style="left:-206.5px;width:300px;text-align:right;top:478.9px;font-size:11px;color:#000;">16377998387</div><div class="b" style="left:22.4px;top:171.0px;width:2.0px;height:2.0px;background:#217346;"></div></div><div class="win" style="left:104px;top:469px;width:1160px;height:400px;border-radius:5px;box-shadow:0 2px 14px rgba(0,0,0,0.35);background:#fff;"><div class="b" style="left:0.0px;top:0.0px;width:1160.0px;height:50.0px;background:#0a7d46;"></div><div class="b" style="left:0.0px;top:49.0px;width:1160.0px;height:1.0px;background:#066a3a;"></div><div class="b" style="left:13.0px;top:7.0px;width:12.0px;height:12.0px;border-radius:50%;background:#ff4a41;box-shadow:inset 0 0 0 0.5px #c02a24;"></div><div class="b" style="left:33.0px;top:7.0px;width:12.0px;height:12.0px;border-radius:50%;background:#fec20a;box-shadow:inset 0 0 0 0.5px #c99500;"></div><div class="b" style="left:53.0px;top:7.0px;width:12.0px;height:12.0px;border-radius:50%;background:#06c92f;box-shadow:inset 0 0 0 0.5px #03951f;"></div><div class="b" style="left:17.2px;top:11.2px;width:3.6px;height:3.6px;border-radius:50%;background:#3f0402;"></div><div class="b" style="left:78.0px;top:6.0px;width:1.0px;height:17.0px;background:rgba(0,0,0,0.12);"></div><svg class="b" style="left:95.0px;top:7.0px" width="16" height="14" viewBox="0 0 16 14"><rect x="0" y="0" width="16" height="14" rx="1.6" fill="#d9ede3"/><rect x="1.1" y="1.1" width="2.7" height="11.8" fill="#0a7d46"/><circle cx="2.45" cy="2.6" r="0.65" fill="#d9ede3"/><circle cx="2.45" cy="4.6" r="0.65" fill="#d9ede3"/><circle cx="2.45" cy="6.6" r="0.65" fill="#d9ede3"/><path d="M5.9 2 H11 L13.6 4.6 V12 H5.9Z" fill="#0a7d46"/><path d="M11 2.3 V4.6 H13.3Z" fill="#d9ede3"/></svg><svg class="b" style="left:127.0px;top:7.0px" width="14" height="14" viewBox="0 0 14 14"><path d="M1.5 0 H12.5 Q14 0 14 1.5 V12.5 Q14 14 12.5 14 H2 L0 12 V1.5 Q0 0 1.5 0Z" fill="#d9ede3"/><rect x="2" y="1.5" width="10" height="5" fill="#0a7d46"/><rect x="3.9" y="9.2" width="6.5" height="4.8" fill="#0a7d46"/><rect x="5.1" y="11.3" width="1.8" height="2.7" fill="#d9ede3"/></svg><svg class="b" style="left:157.0px;top:9.0px" width="16" height="11" viewBox="0 0 16 11"><path d="M0 2.3 V10.3 H8Z" fill="#d9ede3"/><path d="M4.6 6.2 A4.4 4.4 0 1 1 12.3 9.6" fill="none" stroke="#d9ede3" stroke-width="2"/></svg><svg class="b" style="left:180.2px;top:12.2px" width="5" height="4" viewBox="0 0 5 4"><path d="M0 0 H5 L2.5 4Z" fill="#d9ede3"/></svg><svg class="b" style="left:200.0px;top:8.0px" width="13" height="13.5" viewBox="0 0 13 13.5"><path d="M9.6 4.2 A4.9 4.9 0 1 1 4.5 3.2" fill="none" stroke="#4a9f77" stroke-width="2"/><path d="M6.5 0.3 H12.2 V6Z" fill="#4a9f77"/></svg><svg class="b" style="left:539.2px;top:6.5px" width="15" height="15" viewBox="0 0 15 15"><path d="M3 0.5 H10.3 L14 4.2 V14.5 H3Z" fill="#fff"/><path d="M10.3 0.8 V4.2 H13.7" fill="none" stroke="#c9c9c9" stroke-width="0.8"/><path d="M9.3 8.5 H12 M9.3 10.5 H12 M11.5 8.5 V12" stroke="#c4c4c4" stroke-width="0.8"/><rect x="0" y="2.6" width="7.8" height="9.8" fill="#5fae86"/><path d="M1.9 5 L5.9 10 M5.9 5 L1.9 10" stroke="#fff" stroke-width="1.3"/></svg><div class="t" style="left:558.4px;top:8.6px;font-size:13px;color:#ffffff;font-weight:normal;letter-spacing:0.3px;-webkit-text-stroke:0.3px currentColor;">orderlines</div><div class="b" style="left:11.0px;top:28.0px;width:58.0px;height:22.0px;background:#f5f5f5;border-radius:3px 3px 0 0;"></div><div class="t" style="left:22.7px;top:33.0px;font-size:13px;color:#0a7d46;font-weight:normal;-webkit-text-stroke:0.55px currentColor;">Home</div><div class="t" style="left:84.0px;top:33.0px;font-size:13px;color:#e6f2eb;font-weight:normal;-webkit-text-stroke:0.55px currentColor;">Insert</div><div class="t" style="left:144.5px;top:33.0px;font-size:13px;color:#e6f2eb;font-weight:normal;-webkit-text-stroke:0.55px currentColor;">Page Layout</div><div class="t" style="left:246.0px;top:33.0px;font-size:13px;color:#e6f2eb;font-weight:normal;-webkit-text-stroke:0.55px currentColor;">Formulas</div><div class="t" style="left:328.0px;top:33.0px;font-size:13px;color:#e6f2eb;font-weight:normal;-webkit-text-stroke:0.55px currentColor;">Data</div><div class="t" style="left:383.0px;top:33.0px;font-size:13px;color:#e6f2eb;font-weight:normal;-webkit-text-stroke:0.55px currentColor;">Review</div><div class="t" style="left:453.0px;top:33.0px;font-size:13px;color:#e6f2eb;font-weight:normal;-webkit-text-stroke:0.55px currentColor;">View</div><div class="b" style="left:0.0px;top:50.0px;width:1160.0px;height:70.0px;background:#f5f5f5;"></div><div class="b" style="left:0.0px;top:120.0px;width:1160.0px;height:1.0px;background:#d3d3d3;"></div><svg class="b" style="left:14.0px;top:56.0px" width="26" height="32" viewBox="0 0 26 32"><rect x="1" y="3.8" width="21.8" height="25.3" rx="2" fill="#ebb35c" stroke="#d79b43" stroke-width="0.8"/><path d="M5.3 8.6 V5.5 Q5.3 3.3 8 3.3 H10.5 Q11 1 12.1 1 Q13.2 1 13.7 3.3 H16.2 Q18.9 3.3 18.9 5.5 V8.6Z" fill="#6e6e6e"/><circle cx="12.1" cy="3" r="0.9" fill="#ebb35c"/><path d="M8.7 11.6 H18.3 L24.8 18.1 V30.6 H8.7Z" fill="#fff" stroke="#c6c6c6" stroke-width="0.9"/><path d="M18.3 11.6 V18.1 H24.8Z" fill="#ececec" stroke="#c6c6c6" stroke-width="0.8"/></svg><svg class="b" style="left:47.0px;top:70.6px" width="6" height="4" viewBox="0 0 6 4"><path d="M0 0 H6 L3.0 4Z" fill="#777"/></svg><div class="t" style="left:-118.0px;width:300px;text-align:center;top:93.7px;font-size:11px;color:#222;font-weight:normal;">Paste</div><svg class="b" style="left:66.0px;top:53.5px" width="16" height="17" viewBox="0 0 16 17"><path d="M3.6 0.8 L9.8 11 M12.4 0.8 L6.2 11" stroke="#111" stroke-width="1.9" fill="none" stroke-linecap="round"/><circle cx="4" cy="13.3" r="2.7" fill="#f5f5f5" stroke="#2f7de1" stroke-width="1.3"/><circle cx="12.2" cy="13.3" r="2.7" fill="#f5f5f5" stroke="#2f7de1" stroke-width="1.3"/></svg><svg class="b" style="left:66.5px;top:77.0px" width="15" height="16" viewBox="0 0 15 16"><path d="M4.9 0.5 H11.2 L14.2 3.5 V11.5 H4.9Z" fill="#fff" stroke="#bdbdbd" stroke-width="0.9"/><path d="M11.2 0.5 V3.5 H14.2" fill="none" stroke="#bdbdbd" stroke-width="0.8"/><path d="M0.5 4.2 H9.8 V15.4 H0.5Z" fill="#fff" stroke="#bdbdbd" stroke-width="0.9"/></svg><svg class="b" style="left:88.4px;top:83.0px" width="6" height="4" viewBox="0 0 6 4"><path d="M0 0 H6 L3.0 4Z" fill="#777"/></svg><svg class="b" style="left:65.5px;top:100.5px" width="17" height="15.5" viewBox="0 0 17 15.5"><path d="M12.2 1.6 Q13.6 0.2 15 1.2 Q16.4 2.5 15 4 L12 7 L9.8 4.8Z" fill="#efefef" stroke="#9a9a9a" stroke-width="0.8"/><path d="M9.8 4.8 L12 7 L10.3 8.7 L8.1 6.5Z" fill="#d2d2d2" stroke="#9a9a9a" stroke-width="0.7"/><path d="M8.1 6.5 L10.3 8.7 Q9.5 11.5 6.3 14.8 L0.5 11.4 Q3.5 8 8.1 6.5Z" fill="#c8b596"/><path d="M0.5 11.4 L6.3 14.8 Q5.8 15.4 5 15.2 Q2 14 0.3 12.2Z" fill="#2f7de1"/><path d="M2.2 9.6 L7.4 13.2 L6.3 14.8 L0.5 11.4Z" fill="#2f7de1"/></svg><div class="b" style="left:106.6px;top:54.0px;width:1.0px;height:62.0px;background:#d0d0d0;"></div><div class="b" style="left:115.5px;top:58.0px;width:110.0px;height:23.5px;background:#fff;border:1px solid #cfcfcf;border-radius:4px;box-sizing:border-box;"></div><div class="t" style="left:120.5px;top:64.2px;font-size:12.5px;color:#222;font-weight:normal;">Calibri (Body)</div><div class="b" style="left:211.6px;top:62.0px;width:1.0px;height:15.0px;background:#e3e3e3;"></div><svg class="b" style="left:215.5px;top:68.0px" width="6" height="4" viewBox="0 0 6 4"><path d="M0 0 H6 L3.0 4Z" fill="#808080"/></svg><div class="b" style="left:230.7px;top:58.0px;width:46.6px;height:23.5px;background:#fff;border:1px solid #cfcfcf;border-radius:4px;box-sizing:border-box;"></div><div class="t" style="left:236.0px;top:64.2px;font-size:12.5px;color:#222;font-weight:normal;">12</div><div class="b" style="left:263.6px;top:62.0px;width:1.0px;height:15.0px;background:#e3e3e3;"></div><svg class="b" style="left:267.5px;top:68.0px" width="6" height="4" viewBox="0 0 6 4"><path d="M0 0 H6 L3.0 4Z" fill="#808080"/></svg><div class="b" style="left:282.7px;top:58.0px;width:57.3px;height:23.5px;background:linear-gradient(#ffffff,#f6f6f6);border:1px solid #c8c8c8;border-radius:4px;box-sizing:border-box;"></div><div class="b" style="left:312.0px;top:59.0px;width:1.0px;height:21.5px;background:#d8d8d8;"></div><div class="t" style="left:287.5px;top:62.3px;font-size:15px;color:#333;font-weight:normal;">A</div><svg class="b" style="left:300.0px;top:67.0px" width="7.5" height="4" viewBox="0 0 7.5 4"><path d="M0 4 H7.5 L3.75 0Z" fill="#4a90e2"/></svg><div class="t" style="left:317.5px;top:63.6px;font-size:12.5px;color:#333;font-weight:normal;">A</div><svg class="b" style="left:328.0px;top:68.3px" width="7.5" height="4" viewBox="0 0 7.5 4"><path d="M0 0 H7.5 L3.75 4Z" fill="#4a90e2"/></svg><div class="b" style="left:115.5px;top:88.6px;width:96.8px;height:23.0px;background:linear-gradient(#ffffff,#f6f6f6);border:1px solid #c8c8c8;border-radius:4px;box-sizing:border-box;"></div><div class="b" style="left:144.0px;top:89.6px;width:1.0px;height:21.0px;background:#d8d8d8;"></div><div class="b" style="left:173.3px;top:89.6px;width:1.0px;height:21.0px;background:#d8d8d8;"></div><div class="b" style="left:200.3px;top:91.6px;width:1.0px;height:17.0px;background:#dedede;"></div><div class="t" style="left:-20.0px;width:300px;text-align:center;top:94.8px;font-size:12px;color:#333;font-weight:bold;">B</div><div class="t" style="left:8.6px;width:300px;text-align:center;top:92.8px;font-size:15px;color:#333;font-weight:normal;font-style:italic;font-family:Liberation Serif;-webkit-text-stroke:0.4px currentColor;">I</div><div class="t" style="left:36.5px;width:300px;text-align:center;top:93.0px;font-size:13px;color:#333;font-weight:normal;-webkit-text-stroke:0.3px currentColor;">U</div><div class="b" style="left:181.5px;top:106.3px;width:10.0px;height:1.2px;background:#333;"></div><svg class="b" style="left:203.5px;top:98.0px" width="6" height="4" viewBox="0 0 6 4"><path d="M0 0 H6 L3.0 4Z" fill="#808080"/></svg><div class="b" style="left:217.7px;top:88.6px;width:38.5px;height:23.0px;background:linear-gradient(#ffffff,#f6f6f6);border:1px solid #c8c8c8;border-radius:4px;box-sizing:border-box;"></div><svg class="b" style="left:222.5px;top:90.5px" width="18" height="17" viewBox="0 0 18 17"><path d="M0.5 0.5 H17.5 M0.5 0.5 V15 M17.5 0.5 V15 M9 0.5 V15 M0.5 8 H17.5" stroke="#9a9a9a" stroke-width="0.9" stroke-dasharray="0.9 1.9" fill="none"/><path d="M0 16 H18" stroke="#555" stroke-width="1.3"/></svg><div class="b" style="left:244.5px;top:91.6px;width:1.0px;height:17.0px;background:#dedede;"></div><svg class="b" style="left:247.5px;top:98.0px" width="6" height="4" viewBox="0 0 6 4"><path d="M0 0 H6 L3.0 4Z" fill="#808080"/></svg><div class="b" style="left:261.7px;top:88.6px;width:78.3px;height:23.0px;background:linear-gradient(#ffffff,#f6f6f6);border:1px solid #c8c8c8;border-radius:4px;box-sizing:border-box;"></div><svg class="b" style="left:268.0px;top:89.5px" width="17" height="14" viewBox="0 0 17 14"><g transform="rotate(-40 7 8)"><path d="M2.5 4.5 H11.5 V11.5 Q11.5 13 10 13 H4 Q2.5 13 2.5 11.5Z" fill="#fff" stroke="#777" stroke-width="1.1"/><path d="M4 4.5 V2.5 Q7 -0.5 10 2.5 V4.5" fill="none" stroke="#777" stroke-width="1"/></g><path d="M11.5 5 Q15.5 6 15 11.5" stroke="#4a90e2" stroke-width="1.8" fill="none"/></svg><div class="b" style="left:267.0px;top:104.0px;width:18.0px;height:4.6px;background:#f2ec3a;border-radius:1px;"></div><div class="b" style="left:289.6px;top:89.6px;width:1.0px;height:21.0px;background:#d8d8d8;"></div><svg class="b" style="left:292.5px;top:98.0px" width="6" height="4" viewBox="0 0 6 4"><path d="M0 0 H6 L3.0 4Z" fill="#808080"/></svg><div class="b" style="left:301.5px;top:89.6px;width:1.0px;height:21.0px;background:#d8d8d8;"></div><div class="t" style="left:165.2px;width:300px;text-align:center;top:90.4px;font-size:13.5px;color:#333;font-weight:normal;">A</div><div class="b" style="left:306.0px;top:104.0px;width:18.0px;height:4.6px;background:#f0484a;border-radius:1px;"></div><div class="b" style="left:328.2px;top:89.6px;width:1.0px;height:21.0px;background:#d8d8d8;"></div><svg class="b" style="left:331.0px;top:98.0px" width="6" height="4" viewBox="0 0 6 4"><path d="M0 0 H6 L3.0 4Z" fill="#808080"/></svg><div class="b" style="left:349.4px;top:54.0px;width:1.0px;height:62.0px;background:#d0d0d0;"></div><div class="b" style="left:358.6px;top:58.0px;width:87.1px;height:23.5px;background:linear-gradient(#ffffff,#f6f6f6);border:1px solid #c8c8c8;border-radius:4px;box-sizing:border-box;"></div><div class="b" style="left:416.4px;top:58.0px;width:29.3px;height:23.5px;background:linear-gradient(#d9d9d9,#d2d2d2);border:1px solid #b9b9b9;border-left:none;border-radius:0 4px 4px 0;box-sizing:border-box;"></div><div class="b" style="left:387.2px;top:59.3px;width:1.0px;height:21.0px;background:#d8d8d8;"></div><div class="b" style="left:366.5px;top:63.5px;width:12.5px;height:1.2px;background:#333;"></div><div class="b" style="left:366.5px;top:66.5px;width:12.5px;height:1.2px;background:#333;"></div><div class="b" style="left:395.5px;top:67.0px;width:12.5px;height:1.2px;background:#333;"></div><div class="b" style="left:395.5px;top:70.0px;width:12.5px;height:1.2px;background:#333;"></div><div class="b" style="left:424.5px;top:71.5px;width:12.5px;height:1.2px;background:#333;"></div><div class="b" style="left:424.5px;top:74.5px;width:12.5px;height:1.2px;background:#333;"></div><div class="b" style="left:450.4px;top:58.0px;width:36.0px;height:23.5px;background:linear-gradient(#ffffff,#f6f6f6);border:1px solid #c8c8c8;border-radius:4px;box-sizing:border-box;"></div><svg class="b" style="left:455.0px;top:61.0px" width="26" height="20" viewBox="0 0 26 20"><text x="1" y="12.5" font-size="12" font-family="Liberation Sans" fill="#333" transform="rotate(-45 8 8)">ab</text><path d="M7.9 16.8 L16.8 8" stroke="#4a90e2" stroke-width="1.2"/><path d="M13.6 7.2 L18.4 6.3 L17.6 11.2Z" fill="#4a90e2"/></svg><svg class="b" style="left:477.0px;top:68.0px" width="6" height="4" viewBox="0 0 6 4"><path d="M0 0 H6 L3.0 4Z" fill="#808080"/></svg><div class="b" style="left:358.6px;top:88.6px;width:87.1px;height:23.0px;background:linear-gradient(#ffffff,#f6f6f6);border:1px solid #c8c8c8;border-radius:4px;box-sizing:border-box;"></div><div class="b" style="left:387.2px;top:89.6px;width:1.0px;height:21.0px;background:#d8d8d8;"></div><div class="b" style="left:416.4px;top:89.6px;width:1.0px;height:21.0px;background:#d8d8d8;"></div><div class="b" style="left:367.0px;top:94.0px;width:13.0px;height:1.1px;background:#333;"></div><div class="b" style="left:367.0px;top:97.5px;width:9.0px;height:1.1px;background:#333;"></div><div class="b" style="left:367.0px;top:101.0px;width:13.0px;height:1.1px;background:#333;"></div><div class="b" style="left:367.0px;top:104.5px;width:9.0px;height:1.1px;background:#333;"></div><div class="b" style="left:395.0px;top:94.0px;width:13.0px;height:1.1px;background:#333;"></div><div class="b" style="left:397.0px;top:97.5px;width:9.0px;height:1.1px;background:#333;"></div><div class="b" style="left:395.0px;top:101.0px;width:13.0px;height:1.1px;background:#333;"></div><div class="b" style="left:397.0px;top:104.5px;width:9.0px;height:1.1px;background:#333;"></div><div class="b" style="left:424.0px;top:94.0px;width:13.0px;height:1.1px;background:#333;"></div><div class="b" style="left:428.0px;top:97.5px;width:9.0px;height:1.1px;background:#333;"></div><div class="b" style="left:424.0px;top:101.0px;width:13.0px;height:1.1px;background:#333;"></div><div class="b" style="left:428.0px;top:104.5px;width:9.0px;height:1.1px;background:#333;"></div><div class="b" style="left:450.4px;top:88.6px;width:58.1px;height:23.0px;background:linear-gradient(#ffffff,#f6f6f6);border:1px solid #c8c8c8;border-radius:4px;box-sizing:border-box;"></div><div class="b" style="left:479.7px;top:89.6px;width:1.0px;height:21.0px;background:#d8d8d8;"></div><svg class="b" style="left:455.0px;top:93.5px" width="19" height="13" viewBox="0 0 19 13"><path d="M0.8 6.4 L5 2.6 V4.7 H8.6 V8.1 H5 V10.2Z" fill="#4a90e2"/><path d="M7.9 1.8 H18.3 M10.4 4.8 H18.3 M10.4 7.9 H18.3 M7.9 10.9 H18.3" stroke="#333" stroke-width="1.2"/></svg><svg class="b" style="left:485.0px;top:93.5px" width="19" height="13" viewBox="0 0 19 13"><path d="M8.6 6.4 L4.4 2.6 V4.7 H0.8 V8.1 H4.4 V10.2Z" fill="#4a90e2"/><path d="M7.2 1.8 H17 M9.6 4.8 H17 M9.6 7.9 H17 M7.2 10.9 H17" stroke="#333" stroke-width="1.2"/></svg><div class="b" style="left:517.8px;top:54.0px;width:1.0px;height:62.0px;background:#d0d0d0;"></div><svg class="b" style="left:530.0px;top:63.0px" width="22" height="15" viewBox="0 0 22 15"><rect x="1.2" y="1.1" width="10.4" height="12.4" rx="0.8" fill="#fff" stroke="#8a8a8a" stroke-width="0.9"/><path d="M3 4.4 H15.5 M3 10.2 H7" stroke="#777" stroke-width="1.1"/><path d="M15 4.4 Q19 4.6 19 8 Q19 11.2 15.5 11.2" stroke="#4a90e2" stroke-width="2" fill="none"/><path d="M16.2 8.3 L12.8 11.2 L16.2 14.2Z" fill="#4a90e2"/></svg><svg class="b" style="left:531.0px;top:91.0px" width="18" height="17" viewBox="0 0 18 17"><rect x="0.5" y="0.5" width="16" height="15" fill="#fafafa" stroke="#cfcfcf" stroke-width="1"/><path d="M0.5 5.5 H16.5 M0.5 10.5 H16.5 M8.5 0.5 V5 M8.5 11 V15.5" stroke="#dcdcdc" stroke-width="1"/><path d="M3.5 8 H13.5 M3.5 8 L5.5 6.3 M3.5 8 L5.5 9.7 M13.5 8 L11.5 6.3 M13.5 8 L11.5 9.7" stroke="#9cc3f0" stroke-width="1"/></svg><svg class="b" style="left:556.5px;top:98.0px" width="6" height="4" viewBox="0 0 6 4"><path d="M0 0 H6 L3.0 4Z" fill="#aaa"/></svg><div class="b" style="left:574.5px;top:54.0px;width:1.0px;height:62.0px;background:#d0d0d0;"></div><div class="b" style="left:583.6px;top:58.0px;width:160.8px;height:23.5px;background:#fff;border:1px solid #cfcfcf;border-radius:4px;box-sizing:border-box;"></div><div class="t" style="left:588.6px;top:64.2px;font-size:12.5px;color:#222;font-weight:normal;">General</div><div class="b" style="left:730.8px;top:62.0px;width:1.0px;height:15.0px;background:#e3e3e3;"></div><svg class="b" style="left:734.5px;top:68.0px" width="6" height="4" viewBox="0 0 6 4"><path d="M0 0 H6 L3.0 4Z" fill="#808080"/></svg><div class="b" style="left:583.6px;top:88.6px;width:98.2px;height:23.0px;background:linear-gradient(#ffffff,#f6f6f6);border:1px solid #c8c8c8;border-radius:4px;box-sizing:border-box;"></div><div class="b" style="left:611.3px;top:92.0px;width:1.0px;height:15.0px;background:#e3e3e3;"></div><div class="b" style="left:623.7px;top:89.6px;width:1.0px;height:21.0px;background:#d8d8d8;"></div><div class="b" style="left:652.5px;top:89.6px;width:1.0px;height:21.0px;background:#d8d8d8;"></div><div class="t" style="left:594.0px;top:93.6px;font-size:14px;color:#333;font-weight:normal;">$</div><svg class="b" style="left:614.5px;top:98.0px" width="6" height="4" viewBox="0 0 6 4"><path d="M0 0 H6 L3.0 4Z" fill="#808080"/></svg><div class="t" style="left:488.5px;width:300px;text-align:center;top:93.3px;font-size:15px;color:#333;font-weight:normal;">%</div><svg class="b" style="left:662.0px;top:93.0px" width="10" height="14" viewBox="0 0 10 14"><path d="M2.5 2 Q8 3.5 7.5 8 Q7 11.5 3 13 Q5.5 10 5 7.5 Q4.5 5 2.5 4.5 Z" fill="#333"/></svg><div class="b" style="left:686.3px;top:88.6px;width:58.1px;height:23.0px;background:linear-gradient(#ffffff,#f6f6f6);border:1px solid #c8c8c8;border-radius:4px;box-sizing:border-box;"></div><div class="b" style="left:715.2px;top:89.6px;width:1.0px;height:21.0px;background:#d8d8d8;"></div><svg class="b" style="left:693.0px;top:93.0px" width="20" height="15" viewBox="0 0 20 15"><path d="M0 4 L4.5 0.5 V2.5 H7.5 V5.5 H4.5 V7.5Z" fill="#3b88e8"/><text x="8" y="7.5" font-size="9" font-family="Liberation Sans" fill="#333">.0</text><text x="5" y="15" font-size="9" font-family="Liberation Sans" fill="#333">.00</text></svg><svg class="b" style="left:721.0px;top:93.0px" width="20" height="15" viewBox="0 0 20 15"><text x="5.5" y="7.5" font-size="9" font-family="Liberation Sans" fill="#333">.00</text><path d="M9 11.5 L4.5 8 V10 H0.5 V13 H4.5 V15Z" fill="#3b88e8"/><text x="10" y="15" font-size="9" font-family="Liberation Sans" fill="#333">.0</text></svg><div class="b" style="left:753.5px;top:54.0px;width:1.0px;height:62.0px;background:#d0d0d0;"></div><svg class="b" style="left:772.0px;top:59.5px" width="31" height="29" viewBox="0 0 31 29"><rect x="0.5" y="0.6" width="26" height="24.2" rx="1" fill="#fff" stroke="#c9c9c9" stroke-width="0.9"/><path d="M0.5 6.65 H26.5 M0.5 12.7 H26.5 M0.5 18.75 H26.5 M7 0.6 V24.8 M13 0.6 V24.8 M19.5 0.6 V24.8" stroke="#dcdcdc" stroke-width="0.8"/><rect x="7.2" y="0.9" width="5.6" height="5.6" fill="#f5a3aa"/><rect x="7.2" y="6.9" width="9.8" height="5.6" fill="#8fc0f3"/><rect x="7.2" y="12.9" width="12.2" height="5.6" fill="#f5a3aa"/><rect x="7.2" y="18.9" width="5.6" height="5.6" fill="#8fc0f3"/><rect x="14.3" y="14.7" width="15.2" height="13.3" rx="1" fill="#fff" stroke="#aaa" stroke-width="0.9"/><text x="21.9" y="25.5" font-size="13" font-family="Liberation Sans" text-anchor="middle" fill="#555">≠</text></svg><svg class="b" style="left:805.3px;top:70.6px" width="6" height="4" viewBox="0 0 6 4"><path d="M0 0 H6 L3.0 4Z" fill="#808080"/></svg><div class="t" style="left:641.6px;width:300px;text-align:center;top:93.7px;font-size:11px;color:#222;font-weight:normal;">Conditional</div><div class="t" style="left:641.4px;width:300px;text-align:center;top:105.7px;font-size:11px;color:#222;font-weight:normal;">Formatting</div><svg class="b" style="left:828.0px;top:60.0px" width="36" height="31" viewBox="0 0 36 31"><rect x="1.1" y="1.2" width="26.6" height="22.2" rx="1" fill="#fff" stroke="#c9c9c9" stroke-width="0.9"/><rect x="7.6" y="6.8" width="19.8" height="16.3" fill="#deebf9"/><path d="M1.1 6.8 H27.7 M1.1 12.4 H27.7 M1.1 18 H27.7 M7.6 1.2 V23.4 M14.3 1.2 V23.4 M21 1.2 V23.4" stroke="#d3dde9" stroke-width="0.8"/><path d="M31 5.5 L19.5 18" stroke="#a9a9a9" stroke-width="5" stroke-linecap="round"/><path d="M31 5.5 L19.5 18" stroke="#f4f4f4" stroke-width="3.4" stroke-linecap="round"/><circle cx="18.3" cy="20.2" r="3.9" fill="#dcb878" stroke="#b99654" stroke-width="0.7"/><path d="M15.2 22.2 Q12.5 26.5 7.2 28.6 Q14.5 29.6 18.6 25.6 Q19.8 24.3 20.3 23.3Z" fill="#4a90e2"/></svg><svg class="b" style="left:865.0px;top:70.6px" width="6" height="4" viewBox="0 0 6 4"><path d="M0 0 H6 L3.0 4Z" fill="#808080"/></svg><div class="t" style="left:831.5px;top:93.7px;font-size:11px;color:#222;font-weight:normal;">Format</div><div class="t" style="left:828.3px;top:105.7px;font-size:11px;color:#222;font-weight:normal;">as Table</div><div class="b" style="left:0.0px;top:121.0px;width:2000.0px;height:26.0px;background:#fff;"></div><div class="t" style="left:10.0px;top:129.8px;font-size:12px;color:#222;font-weight:normal;">K4</div><svg class="b" style="left:73.0px;top:125.5px" width="7" height="18" viewBox="0 0 7 18"><path d="M0 5.5 L3.5 0 L7 5.5Z M0 12 H7 L3.5 17.5Z" fill="#8c8c8c"/></svg><div class="b" style="left:85.4px;top:120.0px;width:1.0px;height:27.0px;background:#d4d4d4;"></div><svg class="b" style="left:100.0px;top:129.0px" width="11" height="11" viewBox="0 0 11 11"><path d="M0.8 0.8 L10.2 10.2 M10.2 0.8 L0.8 10.2" stroke="#bdbdbd" stroke-width="1.6"/></svg><svg class="b" style="left:127.5px;top:128.5px" width="15" height="11" viewBox="0 0 15 11"><path d="M0.8 5.5 L5 9.8 L14 0.8" stroke="#c9c9c9" stroke-width="1.8" fill="none"/></svg><div class="t" style="left:158.5px;top:124.1px;font-size:17px;color:#444;font-weight:normal;font-family:Liberation Serif;letter-spacing:-0.5px;"><i>f</i><i>x</i></div><div class="b" style="left:180.0px;top:126.0px;width:1.0px;height:16.0px;background:#d9d9d9;"></div><div class="b" style="left:0.0px;top:147.0px;width:2000.0px;height:1.0px;background:#c4c4c4;"></div><div class="b" style="left:0.0px;top:148.0px;width:2000.0px;height:1.0px;background:#fbfbfb;"></div><div class="b" style="left:0.0px;top:149.0px;width:2000.0px;height:1.0px;background:#c8c8c8;"></div><div class="b" style="left:0.0px;top:150.0px;width:1160.0px;height:21.0px;background:linear-gradient(#f7f7f7,#efefef);"></div><div class="b" style="left:0.0px;top:171.0px;width:23.0px;height:2000.0px;background:#f6f6f6;"></div><svg class="b" style="left:6.0px;top:154.0px" width="15" height="15" viewBox="0 0 15 15"><path d="M15 0 V15 H0Z" fill="#dcdcdc"/></svg><div class="t" style="left:-90.5px;width:300px;text-align:center;top:155.6px;font-size:11.5px;color:#5c5c5c;font-weight:normal;">A</div><div class="t" style="left:-23.5px;width:300px;text-align:center;top:155.6px;font-size:11.5px;color:#5c5c5c;font-weight:normal;">B</div><div class="t" style="left:25.5px;width:300px;text-align:center;top:155.6px;font-size:11.5px;color:#5c5c5c;font-weight:normal;">C</div><div class="t" style="left:62.0px;width:300px;text-align:center;top:155.6px;font-size:11.5px;color:#5c5c5c;font-weight:normal;">D</div><div class="t" style="left:113.0px;width:300px;text-align:center;top:155.6px;font-size:11.5px;color:#5c5c5c;font-weight:normal;">E</div><div class="t" style="left:178.5px;width:300px;text-align:center;top:155.6px;font-size:11.5px;color:#5c5c5c;font-weight:normal;">F</div><div class="t" style="left:243.5px;width:300px;text-align:center;top:155.6px;font-size:11.5px;color:#5c5c5c;font-weight:normal;">G</div><div class="t" style="left:308.5px;width:300px;text-align:center;top:155.6px;font-size:11.5px;color:#5c5c5c;font-weight:normal;">H</div><div class="t" style="left:373.5px;width:300px;text-align:center;top:155.6px;font-size:11.5px;color:#5c5c5c;font-weight:normal;">I</div><div class="t" style="left:438.5px;width:300px;text-align:center;top:155.6px;font-size:11.5px;color:#5c5c5c;font-weight:normal;">J</div><div class="b" style="left:621.0px;top:150.0px;width:66.0px;height:21.0px;background:linear-gradient(#ececec,#dedede);"></div><div class="b" style="left:621.0px;top:169.0px;width:66.0px;height:2.0px;background:#217346;"></div><div class="t" style="left:504.0px;width:300px;text-align:center;top:155.6px;font-size:11.5px;color:#217346;font-weight:bold;">K</div><div class="t" style="left:569.0px;width:300px;text-align:center;top:155.6px;font-size:11.5px;color:#5c5c5c;font-weight:normal;">L</div><div class="t" style="left:633.5px;width:300px;text-align:center;top:155.6px;font-size:11.5px;color:#5c5c5c;font-weight:normal;">M</div><div class="t" style="left:698.5px;width:300px;text-align:center;top:155.6px;font-size:11.5px;color:#5c5c5c;font-weight:normal;">N</div><div class="t" style="left:763.5px;width:300px;text-align:center;top:155.6px;font-size:11.5px;color:#5c5c5c;font-weight:normal;">O</div><div class="b" style="left:23.0px;top:150.0px;width:1.0px;height:2000.0px;background:#c6c6c6;"></div><div class="b" style="left:96.0px;top:150.0px;width:1.0px;height:21.0px;background:#dedede;"></div><div class="b" style="left:96.0px;top:171.0px;width:1.0px;height:2000.0px;background:#dadada;"></div><div class="b" style="left:157.0px;top:150.0px;width:1.0px;height:21.0px;background:#dedede;"></div><div class="b" style="left:157.0px;top:171.0px;width:1.0px;height:2000.0px;background:#dadada;"></div><div class="b" style="left:194.0px;top:150.0px;width:1.0px;height:21.0px;background:#dedede;"></div><div class="b" style="left:194.0px;top:171.0px;width:1.0px;height:2000.0px;background:#dadada;"></div><div class="b" style="left:230.0px;top:150.0px;width:1.0px;height:21.0px;background:#dedede;"></div><div class="b" style="left:230.0px;top:171.0px;width:1.0px;height:2000.0px;background:#dadada;"></div><div class="b" style="left:296.0px;top:150.0px;width:1.0px;height:21.0px;background:#dedede;"></div><div class="b" style="left:296.0px;top:171.0px;width:1.0px;height:2000.0px;background:#dadada;"></div><div class="b" style="left:361.0px;top:150.0px;width:1.0px;height:21.0px;background:#dedede;"></div><div class="b" style="left:361.0px;top:171.0px;width:1.0px;height:2000.0px;background:#dadada;"></div><div class="b" style="left:426.0px;top:150.0px;width:1.0px;height:21.0px;background:#dedede;"></div><div class="b" style="left:426.0px;top:171.0px;width:1.0px;height:2000.0px;background:#dadada;"></div><div class="b" style="left:491.0px;top:150.0px;width:1.0px;height:21.0px;background:#dedede;"></div><div class="b" style="left:491.0px;top:171.0px;width:1.0px;height:2000.0px;background:#dadada;"></div><div class="b" style="left:556.0px;top:150.0px;width:1.0px;height:21.0px;background:#dedede;"></div><div class="b" style="left:556.0px;top:171.0px;width:1.0px;height:2000.0px;background:#dadada;"></div><div class="b" style="left:621.0px;top:150.0px;width:1.0px;height:21.0px;background:#dedede;"></div><div class="b" style="left:621.0px;top:171.0px;width:1.0px;height:2000.0px;background:#dadada;"></div><div class="b" style="left:687.0px;top:150.0px;width:1.0px;height:21.0px;background:#dedede;"></div><div class="b" style="left:687.0px;top:171.0px;width:1.0px;height:2000.0px;background:#dadada;"></div><div class="b" style="left:751.0px;top:150.0px;width:1.0px;height:21.0px;background:#dedede;"></div><div class="b" style="left:751.0px;top:171.0px;width:1.0px;height:2000.0px;background:#dadada;"></div><div class="b" style="left:816.0px;top:150.0px;width:1.0px;height:21.0px;background:#dedede;"></div><div class="b" style="left:816.0px;top:171.0px;width:1.0px;height:2000.0px;background:#dadada;"></div><div class="b" style="left:881.0px;top:150.0px;width:1.0px;height:21.0px;background:#dedede;"></div><div class="b" style="left:881.0px;top:171.0px;width:1.0px;height:2000.0px;background:#dadada;"></div><div class="b" style="left:946.0px;top:150.0px;width:1.0px;height:21.0px;background:#dedede;"></div><div class="b" style="left:946.0px;top:171.0px;width:1.0px;height:2000.0px;background:#dadada;"></div><div class="b" style="left:0.0px;top:171.0px;width:1160.0px;height:1.0px;background:#c6c6c6;"></div><div class="b" style="left:0.0px;top:187.0px;width:23.0px;height:1.0px;background:#e4e4e4;"></div><div class="b" style="left:23.0px;top:187.0px;width:1160.0px;height:1.0px;background:#dadada;"></div><div class="t" style="left:-138.5px;width:300px;text-align:center;top:174.5px;font-size:11.5px;color:#5a5a5a;font-weight:normal;">1</div><div class="b" style="left:0.0px;top:203.0px;width:23.0px;height:1.0px;background:#e4e4e4;"></div><div class="b" style="left:23.0px;top:203.0px;width:1160.0px;height:1.0px;background:#dadada;"></div><div class="t" style="left:-138.5px;width:300px;text-align:center;top:190.5px;font-size:11.5px;color:#5a5a5a;font-weight:normal;">2</div><div class="b" style="left:0.0px;top:219.0px;width:23.0px;height:1.0px;background:#e4e4e4;"></div><div class="b" style="left:23.0px;top:219.0px;width:1160.0px;height:1.0px;background:#dadada;"></div><div class="t" style="left:-138.5px;width:300px;text-align:center;top:206.5px;font-size:11.5px;color:#5a5a5a;font-weight:normal;">3</div><div class="b" style="left:0.0px;top:235.0px;width:23.0px;height:1.0px;background:#e4e4e4;"></div><div class="b" style="left:23.0px;top:235.0px;width:1160.0px;height:1.0px;background:#dadada;"></div><div class="t" style="left:-138.5px;width:300px;text-align:center;top:222.5px;font-size:11.5px;color:#217346;font-weight:bold;">4</div><div class="b" style="left:0.0px;top:251.0px;width:23.0px;height:1.0px;background:#e4e4e4;"></div><div class="b" style="left:23.0px;top:251.0px;width:1160.0px;height:1.0px;background:#dadada;"></div><div class="t" style="left:-138.5px;width:300px;text-align:center;top:238.5px;font-size:11.5px;color:#5a5a5a;font-weight:normal;">5</div><div class="b" style="left:0.0px;top:267.0px;width:23.0px;height:1.0px;background:#e4e4e4;"></div><div class="b" style="left:23.0px;top:267.0px;width:1160.0px;height:1.0px;background:#dadada;"></div><div class="t" style="left:-138.5px;width:300px;text-align:center;top:254.5px;font-size:11.5px;color:#5a5a5a;font-weight:normal;">6</div><div class="b" style="left:24px;top:172.9px;width:72px;height:15px;overflow:hidden;"><div class="t" style="left:1.5px;top:2px;font-size:11px;color:#000;word-spacing:-0.6px;">orderID</div></div><div class="b" style="left:97px;top:172.9px;width:60px;height:15px;overflow:hidden;"><div class="t" style="left:1.5px;top:2px;font-size:11px;color:#000;word-spacing:-0.6px;">productID</div></div><div class="b" style="left:158px;top:172.9px;width:36px;height:15px;overflow:hidden;"><div class="t" style="left:1.5px;top:2px;font-size:11px;color:#000;word-spacing:-0.6px;">sales</div></div><div class="b" style="left:195px;top:172.9px;width:35px;height:15px;overflow:hidden;"><div class="t" style="left:1.5px;top:2px;font-size:11px;color:#000;word-spacing:-0.6px;">units</div></div><div class="t" style="left:-206.5px;width:300px;text-align:right;top:190.9px;font-size:11px;color:#000;">16377154275</div><div class="t" style="left:-145.5px;width:300px;text-align:right;top:190.9px;font-size:11px;color:#000;">200002512</div><div class="t" style="left:-108.5px;width:300px;text-align:right;top:190.9px;font-size:11px;color:#000;">7.98</div><div class="t" style="left:-72.5px;width:300px;text-align:right;top:190.9px;font-size:11px;color:#000;">2</div><div class="t" style="left:-206.5px;width:300px;text-align:right;top:206.9px;font-size:11px;color:#000;">16377154275</div><div class="t" style="left:-145.5px;width:300px;text-align:right;top:206.9px;font-size:11px;color:#000;">200200418</div><div class="t" style="left:-108.5px;width:300px;text-align:right;top:206.9px;font-size:11px;color:#000;">8.02</div><div class="t" style="left:-72.5px;width:300px;text-align:right;top:206.9px;font-size:11px;color:#000;">2.01</div><div class="t" style="left:-206.5px;width:300px;text-align:right;top:222.9px;font-size:11px;color:#000;">16377154275</div><div class="t" style="left:-145.5px;width:300px;text-align:right;top:222.9px;font-size:11px;color:#000;">200200888</div><div class="t" style="left:-108.5px;width:300px;text-align:right;top:222.9px;font-size:11px;color:#000;">4</div><div class="t" style="left:-72.5px;width:300px;text-align:right;top:222.9px;font-size:11px;color:#000;">2</div><div class="t" style="left:-206.5px;width:300px;text-align:right;top:238.9px;font-size:11px;color:#000;">16377154275</div><div class="t" style="left:-145.5px;width:300px;text-align:right;top:238.9px;font-size:11px;color:#000;">200201391</div><div class="t" style="left:-108.5px;width:300px;text-align:right;top:238.9px;font-size:11px;color:#000;">3.5</div><div class="t" style="left:-72.5px;width:300px;text-align:right;top:238.9px;font-size:11px;color:#000;">1</div><div class="b" style="left:22.0px;top:220.0px;width:2.0px;height:15.0px;background:#217346;"></div><div class="b" style="left:620.0px;top:218.5px;width:68.0px;height:17.5px;border:2px solid #217346;box-sizing:border-box;"></div><div class="b" style="left:684.5px;top:232.5px;width:5.0px;height:5.0px;background:#217346;border:1px solid #fff;box-sizing:content-box;"></div></div>
</body></html>
